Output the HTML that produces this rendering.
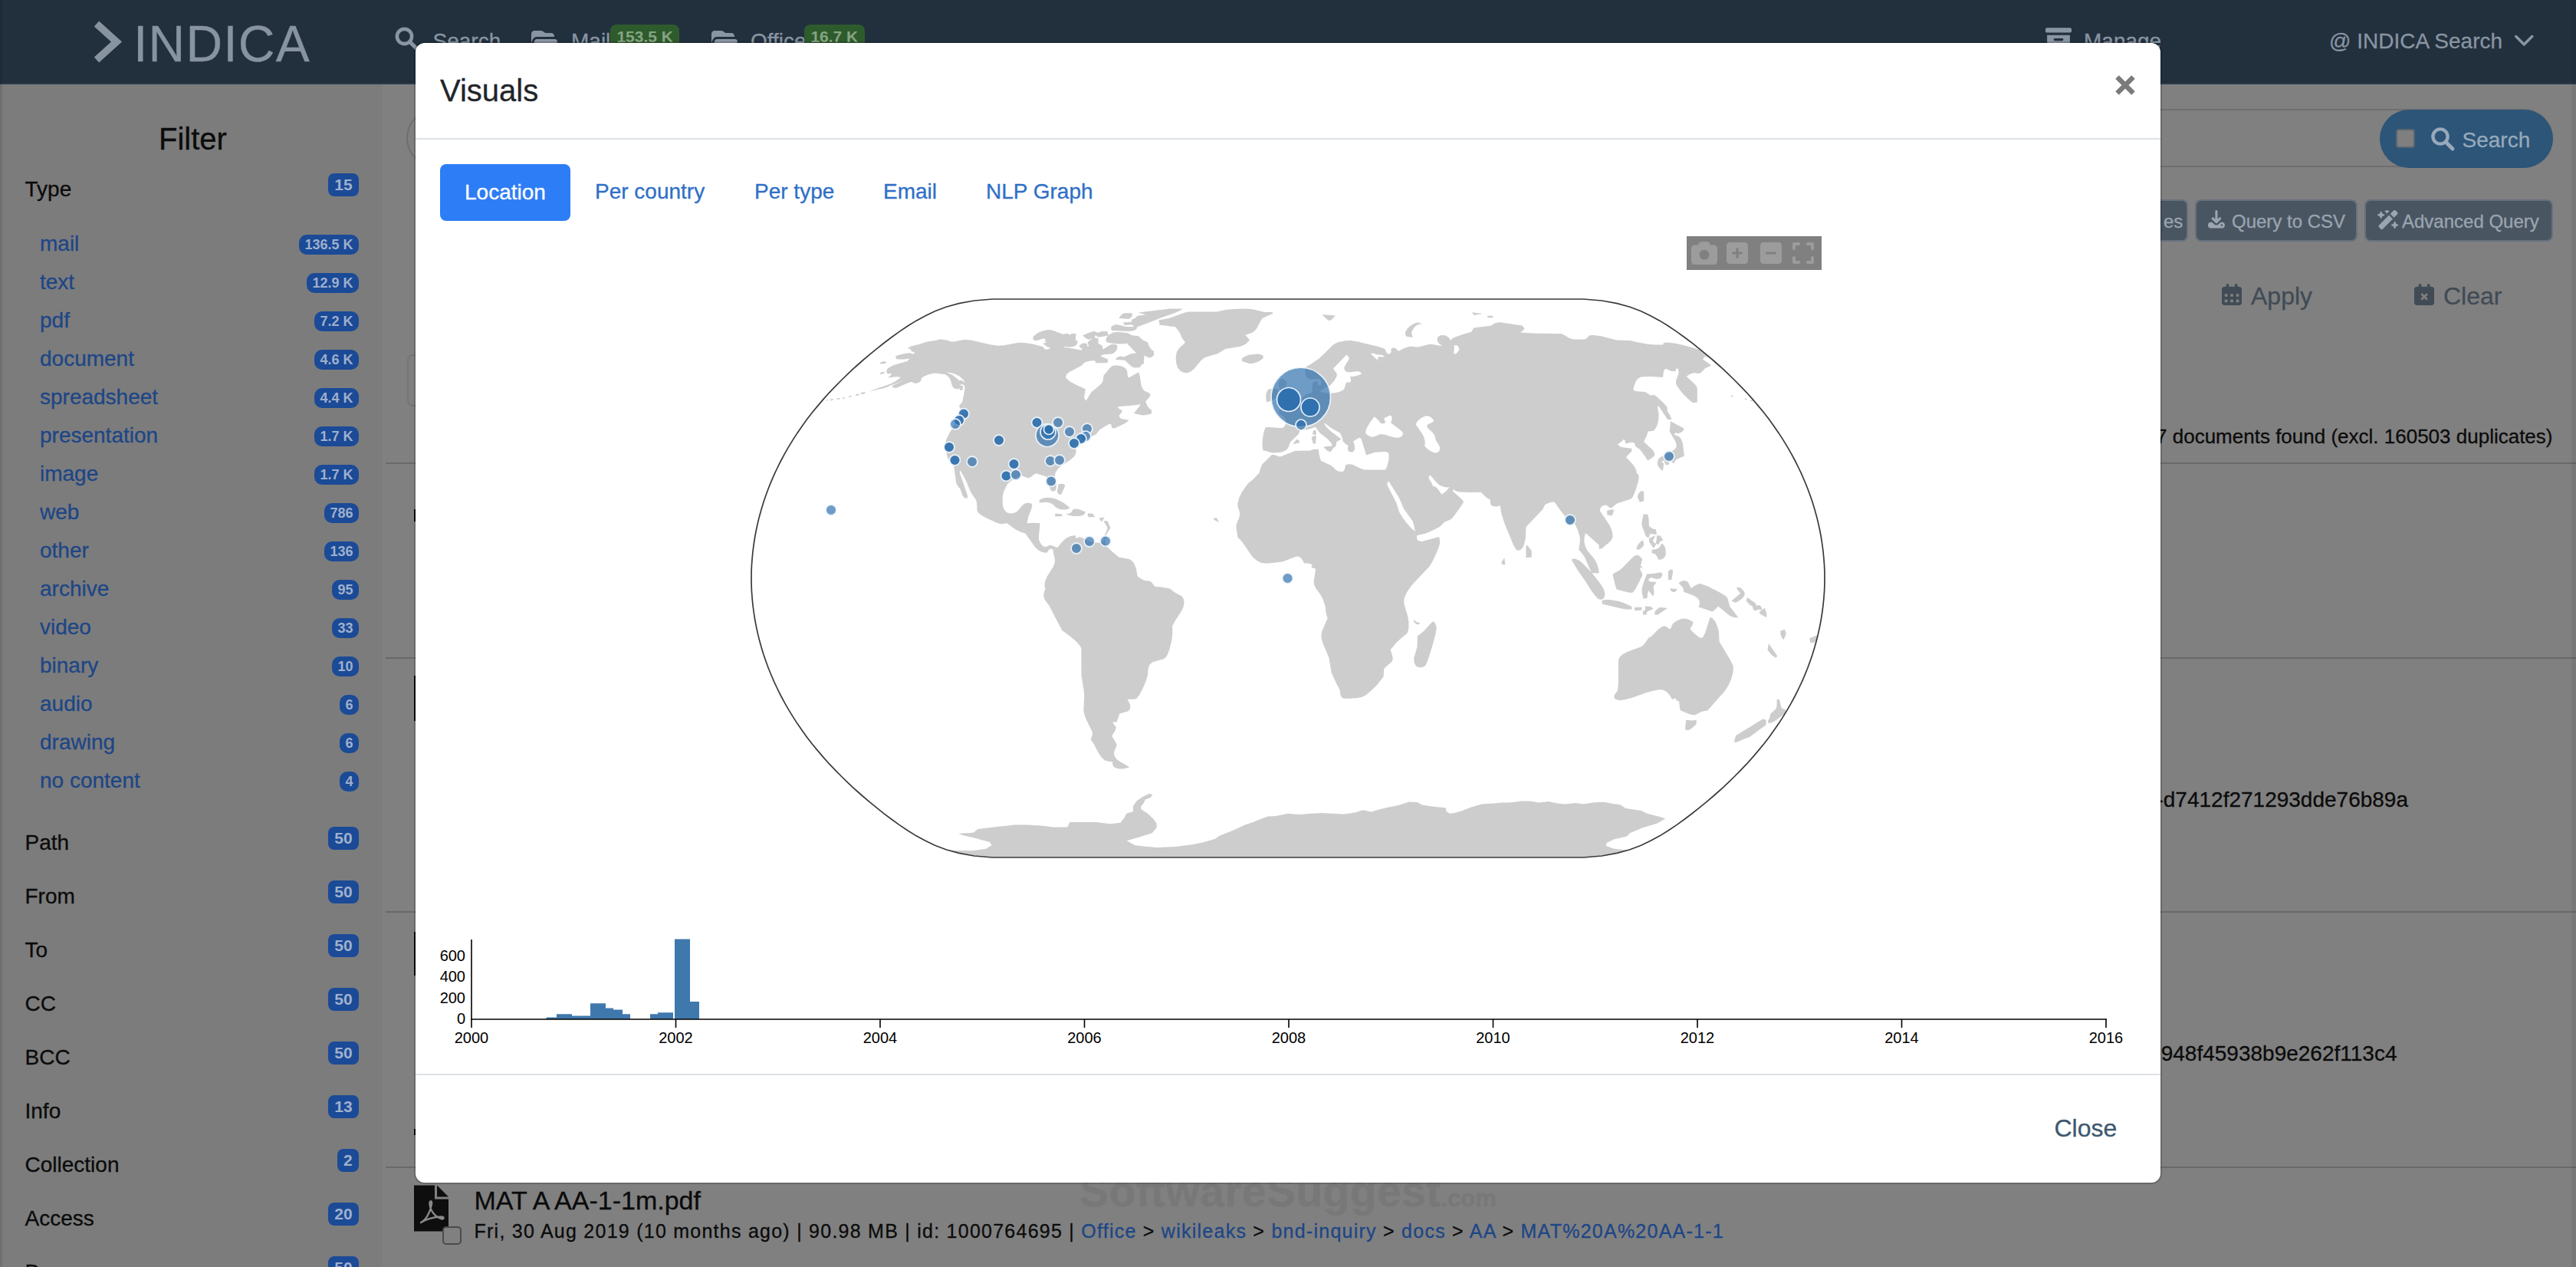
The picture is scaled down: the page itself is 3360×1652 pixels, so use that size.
<!DOCTYPE html><html><head><meta charset="utf-8"><title>INDICA</title><style>
*{box-sizing:border-box;margin:0;padding:0}
html,body{width:3360px;height:1652px;overflow:hidden;background:#808080}
body{font-family:"Liberation Sans",Arial,Helvetica,sans-serif;font-size:28px;color:#0b0b0b;position:relative}
.abs,.t,.ic,.b,.pb{position:absolute;white-space:nowrap}
.t{line-height:1;-webkit-text-stroke:0.3px currentColor}
.nav{left:0;top:0;width:3360px;height:110px;background:#222f3d;border-bottom:2px solid #2a3a4a}
.side{left:0;top:110px;width:499px;height:1542px;background:#7c7c7c}
.nt{color:#8995a2;font-size:28px}
.gb{background:#2e5b2c;color:#86a383;font-weight:700;font-size:21px;line-height:21px;padding:5px 8.4px 5.5px;border-radius:8px}
.h{font-size:28px;color:#0b0b0b;left:32.5px}
.l{font-size:28px;color:#1d4686;left:52px}
.b{right:2892px;background:#1b4a97;color:#9fb0cc;font-weight:700;font-size:21px;line-height:21px;padding:4.5px 8.4px 5px;border-radius:8px}
.pb{right:2892px;background:#1b4a97;color:#9fb0cc;font-weight:700;font-size:18px;line-height:18px;padding:4px 7.5px 4px;border-radius:10px}
.hl{left:503px;width:2857px;height:2px;background:#696969}
.modal{left:542px;top:56px;width:2276px;height:1486px;background:#fff;border-radius:12px;box-shadow:0 0 0 2px rgba(0,0,0,.18)}
.mline{left:542px;width:2276px;height:2px;background:#dee2e6}
.tab{font-size:28px;color:#2f6fc6}
.btn{background:#4a5562;border:2px solid #65717e;border-radius:8px;height:55px;top:260px;color:#9aa5b0;font-size:24px;line-height:51px}
</style></head><body>
<div class="abs nav"></div>
<svg class="ic" style="left:110px;top:20px;width:60px;height:70px" viewBox="110 20 60 70"><polyline points="126,31 152,54.5 126,78" fill="none" stroke="#8893a0" stroke-width="9.5" stroke-linejoin="miter"/></svg>
<div class="t " style="left:174px;top:24.3px;font-size:66px;color:#8893a0;letter-spacing:1.2px">INDICA</div>
<svg class="ic" style="left:510px;top:30px;width:40px;height:40px" viewBox="510 30 40 40"><circle cx="527.5" cy="47.5" r="9.6" fill="none" stroke="#8995a2" stroke-width="4.6"/><path d="M534.5,54.5L542.5,62.5" stroke="#8995a2" stroke-width="5.2" stroke-linecap="round"/></svg>
<div class="t nt" style="left:564.5px;top:39.5px;font-size:28px;">Search</div>
<svg class="ic" style="left:691px;top:38px;width:36.0px;height:32px;" viewBox="0 0 576 512"><path fill="#8995a2" d="m56 225.6-23.6 70.6V96c0-35.3 28.7-64 64-64h138.7c13.8 0 27.3 4.5 38.4 12.8l38.4 28.8c5.5 4.2 12.3 6.4 19.2 6.4h117.3c35.3 0 64 28.7 64 64v16H147c-41.3 0-78 26.4-91.1 65.6zM477.8 448H99c-32.8 0-55.9-32.1-45.5-63.2l48-144C108 221.2 126.4 208 147 208h378.8c32.8 0 55.9 32.1 45.5 63.2l-48 144c-6.5 19.6-24.9 32.8-45.5 32.8"/></svg>
<div class="t nt" style="left:745px;top:39.5px;font-size:28px;">Mail</div>
<div class="abs gb" style="left:796px;top:32px">153.5 K</div>
<svg class="ic" style="left:926px;top:38px;width:36.0px;height:32px;" viewBox="0 0 576 512"><path fill="#8995a2" d="m56 225.6-23.6 70.6V96c0-35.3 28.7-64 64-64h138.7c13.8 0 27.3 4.5 38.4 12.8l38.4 28.8c5.5 4.2 12.3 6.4 19.2 6.4h117.3c35.3 0 64 28.7 64 64v16H147c-41.3 0-78 26.4-91.1 65.6zM477.8 448H99c-32.8 0-55.9-32.1-45.5-63.2l48-144C108 221.2 126.4 208 147 208h378.8c32.8 0 55.9 32.1 45.5 63.2l-48 144c-6.5 19.6-24.9 32.8-45.5 32.8"/></svg>
<div class="t nt" style="left:979px;top:39.5px;font-size:28px;">Office</div>
<div class="abs gb" style="left:1049px;top:32px">16.7 K</div>
<svg class="ic" style="left:2668px;top:34px;width:34.0px;height:34px;" viewBox="0 0 512 512"><path fill="#8995a2" d="M0 64c0-17.7 14.3-32 32-32h448c17.7 0 32 14.3 32 32v32c0 17.7-14.3 32-32 32H32c-17.7 0-32-14.3-32-32zm32 112h448v240c0 35.3-28.7 64-64 64H96c-35.3 0-64-28.7-64-64zm152 64c-13.3 0-24 10.7-24 24s10.7 24 24 24h144c13.3 0 24-10.7 24-24s-10.7-24-24-24z"/></svg>
<div class="t nt" style="left:2718px;top:40.0px;font-size:28px;">Manage</div>
<div class="t nt" style="left:3038px;top:40.0px;font-size:28px;">@ INDICA Search</div>
<svg class="ic" style="left:3280px;top:37px;width:24.5px;height:28px;" viewBox="0 0 448 512"><path fill="#8995a2" d="M201.4 406.6c12.5 12.5 32.8 12.5 45.3 0l192-192c12.5-12.5 12.5-32.8 0-45.3s-32.8-12.5-45.3 0L224 338.7 54.6 169.4c-12.5-12.5-32.8-12.5-45.3 0s-12.5 32.8 0 45.3l192 192z"/></svg>
<div class="abs side"></div>
<div class="t " style="left:207px;top:161.3px;font-size:40px;">Filter</div>
<div class="t h" style="left:32.5px;top:232.5px;font-size:28px;">Type</div>
<div class="b" style="top:225.5px">15</div>
<div class="t l" style="left:52px;top:303.9px;font-size:28px;color:#1d4686">mail</div>
<div class="pb" style="top:305.9px">136.5 K</div>
<div class="t l" style="left:52px;top:353.9px;font-size:28px;color:#1d4686">text</div>
<div class="pb" style="top:355.9px">12.9 K</div>
<div class="t l" style="left:52px;top:403.9px;font-size:28px;color:#1d4686">pdf</div>
<div class="pb" style="top:405.9px">7.2 K</div>
<div class="t l" style="left:52px;top:453.9px;font-size:28px;color:#1d4686">document</div>
<div class="pb" style="top:455.9px">4.6 K</div>
<div class="t l" style="left:52px;top:503.9px;font-size:28px;color:#1d4686">spreadsheet</div>
<div class="pb" style="top:505.9px">4.4 K</div>
<div class="t l" style="left:52px;top:553.9px;font-size:28px;color:#1d4686">presentation</div>
<div class="pb" style="top:555.9px">1.7 K</div>
<div class="t l" style="left:52px;top:603.9px;font-size:28px;color:#1d4686">image</div>
<div class="pb" style="top:605.9px">1.7 K</div>
<div class="t l" style="left:52px;top:653.9px;font-size:28px;color:#1d4686">web</div>
<div class="pb" style="top:655.9px">786</div>
<div class="t l" style="left:52px;top:703.9px;font-size:28px;color:#1d4686">other</div>
<div class="pb" style="top:705.9px">136</div>
<div class="t l" style="left:52px;top:753.9px;font-size:28px;color:#1d4686">archive</div>
<div class="pb" style="top:755.9px">95</div>
<div class="t l" style="left:52px;top:803.9px;font-size:28px;color:#1d4686">video</div>
<div class="pb" style="top:805.9px">33</div>
<div class="t l" style="left:52px;top:853.9px;font-size:28px;color:#1d4686">binary</div>
<div class="pb" style="top:855.9px">10</div>
<div class="t l" style="left:52px;top:903.9px;font-size:28px;color:#1d4686">audio</div>
<div class="pb" style="top:905.9px">6</div>
<div class="t l" style="left:52px;top:953.9px;font-size:28px;color:#1d4686">drawing</div>
<div class="pb" style="top:955.9px">6</div>
<div class="t l" style="left:52px;top:1003.9px;font-size:28px;color:#1d4686">no content</div>
<div class="pb" style="top:1005.9000000000001px">4</div>
<div class="t h" style="left:32.5px;top:1084.5px;font-size:28px;">Path</div>
<div class="b" style="top:1077.5px">50</div>
<div class="t h" style="left:32.5px;top:1154.5px;font-size:28px;">From</div>
<div class="b" style="top:1147.5px">50</div>
<div class="t h" style="left:32.5px;top:1224.5px;font-size:28px;">To</div>
<div class="b" style="top:1217.5px">50</div>
<div class="t h" style="left:32.5px;top:1294.5px;font-size:28px;">CC</div>
<div class="b" style="top:1287.5px">50</div>
<div class="t h" style="left:32.5px;top:1364.5px;font-size:28px;">BCC</div>
<div class="b" style="top:1357.5px">50</div>
<div class="t h" style="left:32.5px;top:1434.5px;font-size:28px;">Info</div>
<div class="b" style="top:1427.5px">13</div>
<div class="t h" style="left:32.5px;top:1504.5px;font-size:28px;">Collection</div>
<div class="b" style="top:1497.5px">2</div>
<div class="t h" style="left:32.5px;top:1574.5px;font-size:28px;">Access</div>
<div class="b" style="top:1567.5px">20</div>
<div class="t h" style="left:32.5px;top:1644.5px;font-size:28px;">Dups</div>
<div class="b" style="top:1637.5px">50</div>
<div class="abs" style="left:530px;top:142px;width:2800px;height:76px;border:2px solid #6e6e6e;border-radius:38px"></div>
<div class="abs" style="left:3104px;top:143px;width:226px;height:76px;border-radius:38px;background:#2c5578"></div>
<div class="abs" style="left:3125px;top:168px;width:25px;height:25px;border-radius:4px;background:#7f7f7f;border:2px solid #5a6670"></div>
<svg class="ic" style="left:3166px;top:160px;width:44px;height:44px" viewBox="3166 160 44 44"><circle cx="3183" cy="178" r="9.6" fill="none" stroke="#97a9ba" stroke-width="4.4"/><path d="M3190,185L3199,194" stroke="#97a9ba" stroke-width="5" stroke-linecap="round"/></svg>
<div class="t " style="left:3211.5px;top:168.5px;font-size:28px;color:#97a9ba">Search</div>
<div class="abs btn" style="left:2600px;width:254px"></div>
<div class="t " style="left:2822px;top:277.4px;font-size:24px;color:#9aa5b0">es</div>
<div class="abs btn" style="left:2863px;width:212px"></div>
<svg class="ic" style="left:2880px;top:274px;width:21.9px;height:25px;" viewBox="0 0 448 512"><path fill="#9aa5b0" d="M256 32c0-17.7-14.3-32-32-32s-32 14.3-32 32v210.7l-41.4-41.4c-12.5-12.5-32.8-12.5-45.3 0s-12.5 32.8 0 45.3l96 96c12.5 12.5 32.8 12.5 45.3 0l96-96c12.5-12.5 12.5-32.8 0-45.3s-32.8-12.5-45.3 0L256 242.7zM64 320c-35.3 0-64 28.7-64 64v32c0 35.3 28.7 64 64 64h320c35.3 0 64-28.7 64-64v-32c0-35.3-28.7-64-64-64h-46.9l-56.6 56.6c-31.2 31.2-81.9 31.2-113.1 0L110.9 320zm304 56a24 24 0 1 1 0 48 24 24 0 1 1 0-48"/></svg>
<div class="t " style="left:2911px;top:277.4px;font-size:24px;color:#9aa5b0">Query to CSV</div>
<div class="abs btn" style="left:3084px;width:246px"></div>
<svg class="ic" style="left:3101px;top:274px;width:28.1px;height:25px;" viewBox="0 0 576 512"><path fill="#9aa5b0" d="m263.4-27 14.8 36.8L315 24.6c3 1.2 5 4.2 5 7.4s-2 6.2-5 7.4l-36.8 14.8L263.4 91c-1.2 3-4.2 5-7.4 5s-6.2-2-7.4-5l-14.8-36.8L197 39.4c-3-1.2-5-4.2-5-7.4s2-6.2 5-7.4l36.8-14.8L248.6-27c1.2-3 4.2-5 7.4-5s6.2 2 7.4 5M110.7 41.7l21.5 50.1 50.1 21.5c5.9 2.5 9.7 8.3 9.7 14.7s-3.8 12.2-9.7 14.7l-50.1 21.5-21.5 50.1c-2.5 5.9-8.3 9.7-14.7 9.7s-12.2-3.8-14.7-9.7l-21.5-50.1-50.1-21.5C3.8 140.2 0 134.4 0 128s3.8-12.2 9.7-14.7l50.1-21.5 21.5-50.1C83.8 35.8 89.6 32 96 32s12.2 3.8 14.7 9.7M464 304c6.4 0 12.2 3.8 14.7 9.7l21.5 50.1 50.1 21.5c5.9 2.5 9.7 8.3 9.7 14.7s-3.8 12.2-9.7 14.7l-50.1 21.5-21.5 50.1c-2.5 5.9-8.3 9.7-14.7 9.7s-12.2-3.8-14.7-9.7l-21.5-50.1-50.1-21.5c-5.9-2.5-9.7-8.3-9.7-14.7s3.8-12.2 9.7-14.7l50.1-21.5 21.5-50.1c2.5-5.9 8.3-9.7 14.7-9.7M460 0c11 0 21.6 4.4 29.5 12.2l42.3 42.3C539.6 62.4 544 73 544 84s-4.4 21.6-12.2 29.5l-88.2 88.2-101.3-101.3 88.2-88.2C438.4 4.4 449 0 460 0M44.2 398.5l264.2-264.2 101.3 101.3-264.2 264.2C137.6 507.6 127 512 116 512s-21.6-4.4-29.5-12.2l-42.3-42.3C36.4 449.6 32 439 32 428s4.4-21.6 12.2-29.5"/></svg>
<div class="t " style="left:3133px;top:277.4px;font-size:24px;color:#9aa5b0">Advanced Query</div>
<svg class="ic" style="left:2898px;top:370px;width:26.2px;height:30px;" viewBox="0 0 448 512"><path fill="#414b55" d="M128 0c17.7 0 32 14.3 32 32v32h128V32c0-17.7 14.3-32 32-32s32 14.3 32 32v32h32c35.3 0 64 28.7 64 64v288c0 35.3-28.7 64-64 64H64c-35.3 0-64-28.7-64-64V128c0-35.3 28.7-64 64-64h32V32c0-17.7 14.3-32 32-32M64 240v32c0 8.8 7.2 16 16 16h32c8.8 0 16-7.2 16-16v-32c0-8.8-7.2-16-16-16H80c-8.8 0-16 7.2-16 16m128 0v32c0 8.8 7.2 16 16 16h32c8.8 0 16-7.2 16-16v-32c0-8.8-7.2-16-16-16h-32c-8.8 0-16 7.2-16 16m144-16c-8.8 0-16 7.2-16 16v32c0 8.8 7.2 16 16 16h32c8.8 0 16-7.2 16-16v-32c0-8.8-7.2-16-16-16zM64 368v32c0 8.8 7.2 16 16 16h32c8.8 0 16-7.2 16-16v-32c0-8.8-7.2-16-16-16H80c-8.8 0-16 7.2-16 16m144-16c-8.8 0-16 7.2-16 16v32c0 8.8 7.2 16 16 16h32c8.8 0 16-7.2 16-16v-32c0-8.8-7.2-16-16-16zm112 16v32c0 8.8 7.2 16 16 16h32c8.8 0 16-7.2 16-16v-32c0-8.8-7.2-16-16-16h-32c-8.8 0-16 7.2-16 16"/></svg>
<div class="t " style="left:2936px;top:370.4px;font-size:32px;color:#414b55">Apply</div>
<svg class="ic" style="left:3149px;top:370px;width:26.2px;height:30px;" viewBox="0 0 448 512"><path fill="#414b55" d="M128 0c17.7 0 32 14.3 32 32v32h128V32c0-17.7 14.3-32 32-32s32 14.3 32 32v32h32c35.3 0 64 28.7 64 64v288c0 35.3-28.7 64-64 64H64c-35.3 0-64-28.7-64-64V128c0-35.3 28.7-64 64-64h32V32c0-17.7 14.3-32 32-32m163.9 220.1c-9.4-9.4-24.6-9.4-33.9 0L224.1 254l-33.9-33.9c-9.4-9.4-24.6-9.4-33.9 0s-9.4 24.6 0 33.9l33.9 33.9-33.9 33.9c-9.4 9.4-9.4 24.6 0 33.9s24.6 9.4 33.9 0l33.9-33.9 33.9 33.9c9.4 9.4 24.6 9.4 33.9 0s9.4-24.6 0-33.9L258 287.9l33.9-33.9c9.4-9.4 9.4-24.6 0-33.9"/></svg>
<div class="t " style="left:3187px;top:370.4px;font-size:32px;color:#414b55">Clear</div>
<div class="t " style="left:0px;top:555.7px;font-size:26px;left:auto;right:30.5px">153567 documents found (excl. 160503 duplicates)</div>
<div class="abs hl" style="top:603px"></div>
<div class="abs hl" style="top:856.5px"></div>
<div class="abs hl" style="top:1187.5px"></div>
<div class="abs hl" style="top:1520.5px"></div>
<div class="t " style="left:0px;top:1028.5px;font-size:28px;left:auto;right:219px">md5: 8c1f0a3b7e9d4c2a5b6f-d7412f271293dde76b89a</div>
<div class="t " style="left:0px;top:1360.0px;font-size:28px;left:auto;right:233.5px">md5: 41d8cd98f00b204e9800998e948f45938b9e262f113c4</div>
<div class="abs" style="left:531px;top:462px;width:60px;height:68px;border:2px solid #757575;border-radius:8px"></div>
<div class="abs" style="left:540px;top:664px;width:6px;height:16px;background:#0c0c0c"></div>
<div class="abs" style="left:540px;top:881px;width:6px;height:59px;background:#0c0c0c"></div>
<div class="abs" style="left:540px;top:1215px;width:6px;height:57px;background:#0c0c0c"></div>
<div class="abs" style="left:540px;top:1472px;width:6px;height:8px;background:#0c0c0c"></div>
<svg class="ic" style="left:538px;top:1543px;width:52px;height:66px" viewBox="538 1543 52 66"><path d="M540,1545.5h27v18h18v42h-45z" fill="#0e0e0e"/><path d="M570,1545.5l15,15h-15z" fill="#0e0e0e"/><path d="M549,1594c6-3 12-12 14-24c1-5-3-5-2.5 0c1,10 8,17 15,19c4,1 4,-2.5 0,-2.5c-9,0 -20,3 -26.500,7.5z" fill="none" stroke="#8a8a8a" stroke-width="2.4" stroke-linejoin="round"/></svg>
<div class="abs" style="left:577px;top:1599px;width:25px;height:24px;border:2px solid #4a4a4a;border-radius:5px;background:#808080"></div>
<div class="t " style="left:618.5px;top:1547.5px;font-size:34px;">MAT A AA-1-1m.pdf</div>
<div class="t " style="left:618.5px;top:1592.6px;font-size:25px;letter-spacing:1.25px">Fri, 30 Aug 2019 (10 months ago) | 90.98 MB | id: 1000764695 | <span style="color:#1d4686">Office</span> &gt; <span style="color:#1d4686">wikileaks</span> &gt; <span style="color:#1d4686">bnd-inquiry</span> &gt; <span style="color:#1d4686">docs</span> &gt; <span style="color:#1d4686">AA</span> &gt; <span style="color:#1d4686">MAT%20A%20AA-1-1</span></div>
<div class="t " style="left:1408px;top:1524.9px;font-size:57px;font-weight:700;color:#787878;letter-spacing:0.4px">SoftwareSuggest<span style="font-size:31px;letter-spacing:0">.com</span></div>
<div class="abs" style="left:0;top:0;width:3px;height:1652px;background:rgba(0,0,0,.09)"></div>
<div class="abs" style="left:3354px;top:0;width:6px;height:1652px;background:rgba(0,0,0,.06)"></div>
<div class="abs modal"></div>
<div class="t " style="left:574px;top:98.3px;font-size:40px;color:#212529">Visuals</div>
<svg class="ic" style="left:2755px;top:94px;width:34px;height:34px" viewBox="2755 94 34 34"><path d="M2761.5,100.5L2782.5,121.5M2782.5,100.5L2761.5,121.5" stroke="#7b7b7b" stroke-width="6.5" fill="none"/></svg>
<div class="abs mline" style="top:180px"></div>
<div class="abs" style="left:574px;top:214px;width:170px;height:74px;border-radius:8px;background:#2d7df6"></div>
<div class="t " style="left:606px;top:236.7px;font-size:28px;color:#fff">Location</div>
<div class="t tab" style="left:776px;top:236.1px;font-size:28px;">Per country</div>
<div class="t tab" style="left:984px;top:236.1px;font-size:28px;">Per type</div>
<div class="t tab" style="left:1152px;top:236.1px;font-size:28px;">Email</div>
<div class="t tab" style="left:1286px;top:236.1px;font-size:28px;">NLP Graph</div>
<div class="abs mline" style="top:1400px"></div>
<div class="t " style="left:2679.5px;top:1455.1px;font-size:32px;color:#3e586e">Close</div>
<svg class="ic" style="left:0;top:0;width:3360px;height:1652px" viewBox="0 0 3360 1652"><defs><clipPath id="fr"><path d="M2065.3,1118.0L2089.4,1116.0L2109.2,1112.4L2126.0,1107.7L2140.5,1102.2L2153.4,1096.1L2165.3,1089.6L2176.3,1082.7L2186.9,1075.6L2197.1,1068.3L2207.0,1060.8L2216.6,1053.2L2226.1,1045.4L2235.4,1037.5L2244.4,1029.5L2253.2,1021.3L2261.8,1013.0L2270.1,1004.7L2278.2,996.2L2285.9,987.6L2293.3,978.9L2300.5,970.2L2307.3,961.4L2313.7,952.5L2319.9,943.6L2325.7,934.6L2331.2,925.6L2336.4,916.6L2341.3,907.5L2345.8,898.5L2350.1,889.4L2354.0,880.3L2357.7,871.3L2361.0,862.2L2364.1,853.2L2366.9,844.1L2369.4,835.1L2371.6,826.1L2373.6,817.0L2375.3,808.0L2376.7,799.0L2377.9,790.0L2378.8,781.0L2379.5,772.0L2379.9,763.0L2380.0,754.0L2379.9,745.0L2379.5,736.0L2378.8,727.0L2377.9,718.0L2376.7,709.0L2375.3,700.0L2373.6,691.0L2371.6,681.9L2369.4,672.9L2366.9,663.9L2364.1,654.8L2361.0,645.8L2357.7,636.7L2354.0,627.7L2350.1,618.6L2345.8,609.5L2341.3,600.5L2336.4,591.4L2331.2,582.4L2325.7,573.4L2319.9,564.4L2313.7,555.5L2307.3,546.6L2300.5,537.8L2293.3,529.1L2285.9,520.4L2278.2,511.8L2270.1,503.3L2261.8,495.0L2253.2,486.7L2244.4,478.5L2235.4,470.5L2226.1,462.6L2216.6,454.8L2207.0,447.2L2197.1,439.7L2186.9,432.4L2176.3,425.3L2165.3,418.4L2153.4,411.9L2140.5,405.8L2126.0,400.3L2109.2,395.6L2089.4,392.0L2065.3,390.0L1294.7,390.0L1270.6,392.0L1250.8,395.6L1234.0,400.3L1219.5,405.8L1206.6,411.9L1194.7,418.4L1183.7,425.3L1173.1,432.4L1162.9,439.7L1153.0,447.2L1143.4,454.8L1133.9,462.6L1124.6,470.5L1115.6,478.5L1106.8,486.7L1098.2,495.0L1089.9,503.3L1081.8,511.8L1074.1,520.4L1066.7,529.1L1059.5,537.8L1052.7,546.6L1046.3,555.5L1040.1,564.4L1034.3,573.4L1028.8,582.4L1023.6,591.4L1018.7,600.5L1014.2,609.5L1009.9,618.6L1006.0,627.7L1002.3,636.7L999.0,645.8L995.9,654.8L993.1,663.9L990.6,672.9L988.4,681.9L986.4,691.0L984.7,700.0L983.3,709.0L982.1,718.0L981.2,727.0L980.5,736.0L980.1,745.0L980.0,754.0L980.1,763.0L980.5,772.0L981.2,781.0L982.1,790.0L983.3,799.0L984.7,808.0L986.4,817.0L988.4,826.1L990.6,835.1L993.1,844.1L995.9,853.2L999.0,862.2L1002.3,871.3L1006.0,880.3L1009.9,889.4L1014.2,898.5L1018.7,907.5L1023.6,916.6L1028.8,925.6L1034.3,934.6L1040.1,943.6L1046.3,952.5L1052.7,961.4L1059.5,970.2L1066.7,978.9L1074.1,987.6L1081.8,996.2L1089.9,1004.7L1098.2,1013.0L1106.8,1021.3L1115.6,1029.5L1124.6,1037.5L1133.9,1045.4L1143.4,1053.2L1153.0,1060.8L1162.9,1068.3L1173.1,1075.6L1183.7,1082.7L1194.7,1089.6L1206.6,1096.1L1219.5,1102.2L1234.0,1107.7L1250.8,1112.4L1270.6,1116.0L1294.7,1118.0Z"/></clipPath></defs><g clip-path="url(#fr)"><path d="M2408.4,815.5L2407.3,819.1L2402.8,819.1L2403.9,814.3ZM2196.9,594.4L2186.8,598.9L2182.8,604.3L2181.6,603.6L2178.8,600.4L2177.2,599.8L2175.8,600.1L2176.8,601.3L2177.4,602.8L2176.6,606.1L2172.4,606.1L2170.4,600.4L2168,601.3L2167.3,601.9L2170.1,604.6L2169,614.2L2164.7,610.5L2162.4,607.1L2161.9,604.9L2162.2,601.7L2163.1,599L2164.5,597L2167.6,595.1L2176,591.4L2180.7,588.6L2184.1,586.1L2186.6,583L2186.5,579.3L2185.3,575.3L2177.7,562.7L2178.9,549.2L2196.1,558.2L2196.1,560.9L2193.2,563.4L2190.5,564.8L2188.7,565.1L2186.8,564.8L2185.6,563.9L2184.4,565.6L2183.9,567.1L2186,567.4L2189.4,568.9L2190.8,570L2193.1,573.1L2194.7,577.3ZM2373.2,829.3L2366.4,838L2361.3,838L2360.2,832.3L2370.9,828.1L2372,829ZM1947.3,414.2L1940.3,414.2L1940.3,411.8L1947.3,411.8ZM2304.3,805.3L2295.3,800.2L2295.3,796.6L2296.7,796.9L2297.4,795.8L2301.5,792.7L2304.3,799.3ZM2329.7,826.6L2326.6,834.1L2324.9,832.6L2323.5,830.1L2322.6,826.7L2322.1,822.4L2325.1,821.9L2327.5,820.3L2329.2,824.3ZM2297.9,795.4L2293.1,794.5L2289.6,796.5L2288,795.7L2286.6,793.6L2285.7,790.3L2283.9,789.6L2281.9,788.3L2277.6,783.4L2279,778.9L2288.8,785.8L2290.8,788.3L2291.4,790.6L2293.6,788.8L2295.5,789.6L2297.9,792.1ZM1933.8,409.1L1922.8,410.9L1919.7,407.3ZM2275.9,773.8L2275.1,777L2272.8,780.1L2266.6,784.4L2263.4,785.8L2258.4,783.4L2270.2,773.5L2266.8,769.7L2264.9,766L2269.3,766L2270.7,766.7L2274.8,771.1ZM2144.2,653.2L2138.8,654.7L2136,648.4L2136.3,645.8L2137.2,643.7L2138.7,641.8L2140.8,640L2144.2,640.9ZM2318.4,855.4L2316.2,857.8L2314.9,857L2310.8,853.9L2305.5,847.6L2306.9,838.9ZM2160.8,697L2152.8,695.9L2151.9,697.1L2150.7,700.9L2148.2,700.4L2146.4,698.8L2145.6,695.7L2142.2,687.3L2141.4,683.2L2141.7,679.7L2143.6,670.6L2148.7,670.6L2149.2,671.4L2150.1,673.9L2150.6,677.6L2150.9,685.6L2152.9,687.7L2155,689.1L2157.4,689.9L2160,690.1ZM2169.3,704.5L2165.3,706L2162.8,710.8L2160.5,708.7L2158.7,712.2L2156.6,714.7L2154.5,711.2L2150.9,706.6L2150.9,702.1L2158.8,698.2L2158.2,700.9L2156.3,703.6L2156.3,706.3L2159.4,709L2160.7,703.6L2161.1,698.2L2164.2,698.2L2165.4,698.6L2167.2,700.7ZM2267.4,805.3L2262.2,805.2L2258,803.8L2255.1,801.9L2241.2,790.6L2236,795.8L2233.6,797.5L2215.5,791.5L2216.6,788.5L2216.9,786.1L2216.4,783.2L2214.9,780.7L2212.3,778.4L2208.8,776.5L2196.1,771.7L2196.2,769.4L2195.4,767L2193.7,764.5L2189.6,760.6L2192.1,758.4L2194.5,757.2L2197.2,757L2199.2,757.4L2200.7,758.2L2201.9,759.3L2205.9,766.9L2209.4,764.4L2213.9,762L2216.4,761.3L2218.8,761.3L2227.1,764.2L2243.3,772.5L2250.2,776.8L2252.7,779.1L2253.3,780.1L2256.4,790.9ZM2172.9,722.5L2172.1,725.3L2169.6,727.9L2167,729.4L2163.1,729.4L2161.3,725.4L2159.3,722.8L2157,721.5L2154.6,721.6L2154.6,716.8L2159.5,716.2L2163.1,714.7L2165.6,712.3L2166.7,709L2168.2,709.3L2169.4,710L2171.4,712.5L2172.5,716.7ZM2182.2,744.7L2180.3,756.1L2175.8,756.1L2175.8,745.6L2178.9,742.3L2181.4,742.9L2182,743.7ZM2105.3,664.6L2104.6,667.5L2102.4,672.4L2096.2,671.2L2096.2,665.8L2101.1,664.4ZM2144.2,710.5L2142.4,713.2L2139.2,716L2138.2,716.5L2134.3,716.5L2135.1,713L2136.8,709.8L2139.4,706.7L2143,703.9ZM2187.9,768.1L2185.8,771L2184.4,771.8L2182.8,772L2181.3,771.7L2180,770.8L2177.7,767.2ZM2329.4,924.7L2328.3,930.4L2318.8,937.6L2313.7,940.9L2307.7,943.2L2305.5,940.9L2308.3,935.4L2309.4,930.4L2314.7,926L2317,923.2L2317.5,919.8L2317.6,912.1L2321,912.1L2323,921.1L2324.4,923.7L2327,924.8ZM1855.1,422.3L1850.1,423L1848,424L1844.5,427L1841.9,431.5L1841,434.3L1842.7,440L1834.3,438.8L1832.8,435.2L1833.2,432.7L1835.3,428.9L1839,425.3L1843.5,422.4L1847.6,420.8L1850,420.5ZM2168.4,748.6L2168.2,750.1L2167.1,752.6L2166.2,753.6L2163.9,754.8L2160.2,755.1L2154,753.1L2152.1,753.8L2149.8,755.8L2151,757.6L2152.8,758.6L2156,758.8L2159.4,758.7L2160.5,758.6L2160.6,758.6L2159.3,761.1L2156.6,764.8L2157.4,771.8L2157.1,776.8L2155.8,776.7L2154.7,775.8L2150.4,769.9L2149,774L2148.7,779.8L2143.6,780.7L2141.7,772.2L2141.5,767.7L2144,758.9L2148.1,748.6L2155.7,747.9L2166.2,746.2ZM2142.5,739.9L2140,740.1L2139.2,740.7L2139.1,741.4L2139.6,743.4L2142,747.5L2142.2,748.9L2141.9,751L2133.5,767.5L2131.5,770.5L2129.8,772.3L2128.4,772.9L2124.1,772.4L2109.2,768.7L2108,766.7L2106.7,762.6L2104.4,752.9L2103.6,748.6L2103.8,748.3L2112.2,743.8L2116.6,739.9L2128.8,727.5L2131.7,725.1L2134,723.9L2135.8,723.8L2137.6,724.4L2139.3,725.7L2141.9,728.8L2142.1,729.5L2142.2,729.7L2142.2,729.9L2142.2,730.3L2142.1,729.4L2139.9,737.8L2141.3,738.5ZM2174.9,793L2162.5,801.4L2158.3,801.4L2158.3,798.1L2158.7,797L2160.9,794.8L2165,791.8ZM2156.3,794.2L2149.1,797.1L2147.9,798.8L2147.8,801.4L2143.3,801.4L2142.5,796.6L2145.3,796.6L2145.9,794.2L2146.1,790.6L2152.8,790.8L2155,792.3ZM2141.4,795.4L2132.3,796.3L2132,793.3L2132.6,791.8L2141.4,791.8ZM2303.5,945.3L2282.1,960.9L2274.1,963.7L2265.4,967.8L2262,967.8L2262.6,964.2L2264.3,959.1L2299.3,937.6L2303.5,938.5ZM2128.4,794.5L2121.1,794.4L2115,793.5L2089.7,787.6L2089.7,783.1L2093.9,782L2099.7,782L2107.8,783.2L2111.9,784.1L2120.1,787L2128.4,790.9ZM2260.9,870.1L2260.2,878L2258,885.9L2254.4,893.7L2249.4,901.6L2227.1,926.5L2223,927L2218.9,928.3L2210.4,932.5L2207.3,932.1L2203.1,930.9L2191.8,926.2L2190.8,921.1L2190.1,914.5L2188.8,913.8L2186.5,913.6L2185.3,910L2182.8,911.8L2180.8,911.5L2177.6,906.1L2174.1,902.2L2170.3,899.9L2168.2,899.4L2163.8,899.3L2155,900.9L2147.7,903L2127.5,910.3L2117.9,912.5L2112.9,913L2109.5,912.6L2107.2,911.7L2106.3,911L2105.4,909.1L2105.5,906.7L2109.5,901L2110.3,898L2110.9,889.6L2110.9,862.3L2111.6,858.7L2113.8,855.4L2117.4,852.5L2122.5,850L2141,843L2143.4,841L2146,837.9L2150.4,831.4L2151.9,831L2154,829.7L2162.9,820.8L2167.2,817.5L2169.6,816.5L2172.3,816.6L2174.8,817.9L2177.4,820.3L2178.4,820.1L2179.5,819L2181.2,814.6L2182.9,812.3L2187,809.5L2192.2,807.2L2195.6,806.6L2199.1,806.7L2203.1,808.1L2208.2,810.7L2208.2,814L2204.5,819.7L2204.8,820.3L2207.5,823.5L2212.4,828.1L2216.9,831.3L2218.9,832L2220.6,831.2L2221.5,830.3L2224.1,825.2L2230.7,804.4L2234.1,806.4L2237.1,810.2L2238.5,812.9L2240.9,819.5L2242,823.6L2242.6,836.5L2257.4,861.4L2260.4,867.7ZM1741.8,411.5L1737.3,416.4L1734.7,418.1L1732.8,417.6L1730.4,416.1L1724.3,410.3L1730.8,410.4ZM1997.8,726.4L1990.5,727.3L1990.5,713.1L1991,710.8L1992.1,711.3L1993.7,712.8L1997.4,717.8L1997.8,719.2ZM2212.7,944.1L2207.4,949.1L2203.2,951.7L2200.7,952.2L2198,951L2199.2,938.8L2207.1,939.5L2212.7,938.8ZM2246.3,467.9L2243.7,469.2L2240.3,469.3L2232.5,467.5L2223.7,464.6L2222.4,466.2L2221.2,468.8L2225.9,471.8L2232.2,476.6L2223.7,480.5L2221.3,483.4L2217.5,486.8L2215,487.1L2210.7,486.2L2207.9,486.5L2203.9,487.9L2199.7,490.7L2210.5,500.8L2212.3,503L2213.5,505.2L2213.8,507.2L2213.8,524.6L2210.1,525.1L2209.5,525.2L2209.2,525.3L2209.2,525.4L2210.2,525.5L2209.1,525.3L2207.9,524.8L2204.8,522.7L2196.1,514.4L2191.6,509.1L2187.3,503L2186.1,500.2L2186,497.7L2186.9,494.3L2189.1,488.2L2189.6,485.3L2189.2,482.8L2188.2,480.2L2186.9,480.5L2186,481.3L2185.7,482.5L2185.9,484.1L2179.7,484L2174.1,481.2L2172.8,481.1L2171.5,481.6L2170.6,482.6L2170,484.1L2169,491.9L2154.2,491.1L2141.6,491.2L2139.1,492.1L2136.9,493.4L2135,495.3L2133.4,497.8L2131.1,504.3L2130.4,508.4L2132.2,509.4L2135,510.2L2145.3,510.9L2147.3,511.7L2152.7,515.4L2154.2,515.5L2157.1,514.7L2160.2,516.4L2169.1,524.7L2173.8,529.7L2174.6,531.8L2174.9,536.6L2178.4,541.6L2180.3,547.1L2175.2,547.1L2162.8,528.5L2162.2,531.9L2163.6,539.9L2163.5,544.3L2162.7,550.6L2161,555.8L2159.8,558.1L2156.9,561.8L2149.5,562.4L2148,568.2L2144.2,575.5L2146.8,578.6L2156,587.1L2157.4,589.4L2158.2,591.7L2158.1,593.7L2157,595.3L2154.7,597.1L2149.2,600.4L2144.9,593.9L2138.8,585.7L2133.5,582.4L2132.2,578.4L2131.2,577.3L2128.3,576.8L2120.2,578.5L2119.5,574.3L2118.8,573.2L2117.9,572.8L2116.4,574.5L2110.1,579.4L2111.8,581.2L2114.9,582.9L2128.4,584.8L2128.4,588.4L2125.1,591.4L2121,595.9L2131.2,607.3L2134.3,613.2L2135.1,617.5L2136.7,618.6L2137.5,620.4L2137.6,623.3L2136.8,628.3L2133.1,640.1L2129.7,648L2127.3,650.5L2108.6,656.8L2103.1,661.5L2101.1,662.5L2099.3,662.1L2096.2,659.2L2094.8,658.6L2091.4,659.1L2090,659.7L2088,661.6L2087,664.4L2087.1,666.4L2098.8,683.7L2101.4,688.9L2103,693.9L2103.6,698.5L2103.2,701L2102.2,703.5L2099.2,707L2092.1,712.8L2089.5,715.6L2086.4,715.6L2085.8,715.4L2085.5,714.6L2085.8,711.7L2085.5,710.5L2068,694.9L2066.4,702.3L2066.5,707L2066.9,709.5L2068.6,714.4L2071.4,719.1L2079.4,728.4L2082.5,733.9L2083.7,736.9L2085.3,743.5L2085.8,747.1L2082.8,747.4L2076.5,747.1L2088.2,762.1L2091.7,767.9L2093.3,772.9L2093.3,776.2L2092.5,779L2091,780.8L2088.7,781.8L2085.9,781.5L2084.2,780.4L2080,775.9L2074.6,768.4L2068,757.9L2058.9,745.1L2049.7,730L2051.2,728.7L2053.9,728.6L2056.8,729.4L2059.8,730.8L2064.4,734.5L2074.5,744.7L2075.6,744.7L2073,740.7L2066.7,726.1L2062.6,720.4L2059.3,717.1L2061,704.7L2060.5,699.5L2057.8,690.8L2052.8,680.2L2050.5,682.6L2048.3,683.9L2047.6,684.1L2046.9,684.1L2043.5,683.2L2042.8,678.9L2041.2,673L2035.3,665.6L2027.7,654.7L2025.7,654.4L2021.2,655.2L2015.3,658L2012.2,664.3L1990.5,687.1L1989.9,700.5L1989.1,705.8L1987.9,710.1L1986.4,713.4L1984.6,715.8L1982.3,717.2L1979.8,717.7L1979,717.5L1977.2,716.1L1974.3,711.3L1962.8,683.2L1958.5,670.5L1956.4,658.6L1954.9,659.7L1951.9,660.4L1948.9,660.3L1945.7,659.3L1944,657.3L1943.8,654.2L1944.2,652.3L1938.5,648.5L1931.5,641.8L1915.8,642.1L1904.6,641.5L1899.5,640.4L1896.3,638.7L1895.4,637.6L1894.9,639.4L1895.9,641.2L1907.2,651.6L1909,654.1L1908.5,655.5L1906.1,659.5L1895.9,673.5L1892.9,676.9L1884.5,680.5L1878,686.8L1870.1,691.1L1859,695.7L1848.4,697.9L1848,698.4L1847.9,701.4L1848.7,703.7L1850.4,705.2L1851.6,705.6L1854.6,706L1877.1,700L1878.2,705.9L1878.2,708.1L1876.8,713.1L1873.9,720.5L1868.9,731.3L1865.7,736.8L1863.9,739.3L1844.1,760L1841.1,763.6L1836.2,770.4L1834.4,773.4L1832,778.9L1831.4,781.4L1831.3,785.8L1832.9,792.5L1836.3,804.1L1837.4,810.2L1837.5,818.1L1836.9,821.6L1836.1,824.4L1834.8,826.3L1825.8,833.8L1821.3,838.1L1813.7,847.3L1816.6,856.9L1816.5,860.2L1815.6,862.3L1814.1,864.1L1807.5,869.4L1805.2,872.2L1804.6,882.1L1803.9,883.2L1795.3,894.1L1789.6,899.6L1782.6,905.5L1779,907.8L1776.1,909L1769.5,910.3L1759.6,910.8L1753.1,910.7L1750.4,909.6L1748.8,907.6L1747.4,898.9L1742.5,889.9L1736.7,877L1733.3,857.2L1725.6,839L1724,833.5L1723.5,830.2L1723.5,827.3L1724.5,822.5L1730.8,808.1L1731.6,806.1L1731.8,805.4L1731.9,805L1731.8,805.7L1731.7,805.9L1731.5,805.7L1730.9,804L1729.3,798.1L1728.8,791.2L1725.4,781.2L1723.1,776.5L1716.4,767.2L1714.1,762.5L1713.6,758.6L1716.1,742L1714.1,740.7L1710.7,740.2L1710.8,738.3L1711.6,736.9L1709.8,735.3L1705.6,734.4L1700.9,734.2L1699.2,730.4L1697.1,727.7L1694.6,726.1L1693.1,725.6L1691.6,725.5L1689.7,725.9L1676.1,731.3L1672.1,732.4L1654.6,734.4L1649.8,734.5L1644.5,733.7L1639.4,731.1L1634.6,726.9L1632.3,724.2L1620.9,707.4L1617.3,703.3L1614.6,700.9L1612.9,691.2L1612.3,685.6L1613.2,682.3L1616.1,675.4L1617.1,671.2L1616.8,667.6L1614.8,661.7L1614.3,658.6L1614.5,655.5L1616.3,648.9L1619.8,641.7L1625.1,634.1L1628.4,630.1L1634.8,624.7L1642.8,616.3L1643.8,611.8L1646.2,605.5L1659,592.9L1661.9,592.9L1668,595.3L1669.8,595.6L1689,588.1L1694.6,587.7L1709,587.5L1710.9,586.4L1712.5,586L1719.8,585.7L1720.5,592.2L1722.9,600.7L1736.5,607L1742.6,612.8L1745.5,614.4L1750.5,615.1L1752.2,614.6L1754,611.7L1755,606.4L1756.7,605.7L1759.8,605.3L1762.5,605.5L1764.8,606.1L1775.1,611L1779.8,612.4L1807.2,612.4L1809.2,608L1811.1,600.9L1811.7,593.2L1811.5,591.9L1810.4,590.3L1808.3,589.3L1805.4,589L1793.3,589.8L1782.1,593.5L1775.6,572.5L1774.5,571.2L1773.1,570.7L1770.4,571.9L1765.2,575.5L1767,581.5L1767.1,584.8L1766.5,587.2L1764.8,589.3L1762.9,589.6L1760.7,589.3L1759.1,588.3L1758.1,586.6L1757.8,583.9L1758.7,581.2L1755.6,579.2L1751.6,575.5L1750.9,571.3L1748.2,564.8L1737.5,558.8L1728.2,551.9L1727.1,551.9L1729.4,556L1731.9,558.8L1737,563.3L1749.4,572.5L1743.2,576.4L1742.6,581.5L1739.2,584.2L1735.3,589.6L1731,587.4L1726.2,583L1730.5,582.1L1736.7,581.8L1737.5,580.9L1736.6,578.1L1731.8,572.6L1721.5,564.4L1718.8,561.1L1716.7,557.9L1715.5,556.1L1716.1,556.3L1715.7,556.6L1714.8,557L1713.5,557.5L1706.5,559.7L1695.5,561.5L1693.8,566L1682.8,576.7L1680.6,583.3L1678,586.5L1676.1,587.7L1671.4,589.5L1668.4,590.1L1661.4,590.5L1658.4,590.2L1651.3,588.1L1647.6,587.5L1646.5,581L1646.7,573.3L1648,565.5L1650.4,557.3L1655.9,557L1668.2,558.1L1672,558L1674.5,556.9L1676.2,554.6L1676.8,553.1L1677.2,549.2L1676.6,546.6L1673.7,542.8L1668.2,539L1668.2,534.5L1672.8,534L1680,531.4L1684.9,528.5L1704.3,514.1L1711.3,512L1712,501.1L1712.7,499.1L1714.1,497.7L1716.2,497.1L1718.9,497L1718.7,499.4L1719.8,502.1L1722,502.1L1723.1,500.9L1723.4,499.4L1723.1,497L1721.3,494.7L1718.1,494L1712.5,494.8L1709.4,494.7L1705.9,493.2L1704.6,491.9L1702.9,488.3L1702.4,485.9L1702.3,482.4L1703.4,478.4L1710.9,474.1L1720.9,467.3L1738.4,449.9L1742.8,447.3L1745.4,446.2L1754.7,444.3L1762.1,443.9L1772.4,445.8L1796.3,451.6L1804.9,454.3L1806.6,455.6L1809.4,461.2L1810.3,461.6L1811.5,461.5L1813.4,460.7L1814.4,459L1814.5,455L1815.7,454.1L1817.3,453.6L1819,453.5L1820.2,454.1L1824.1,457.7L1831.8,454L1838,452.1L1841.6,451.7L1846.7,452.5L1850.2,452.5L1864.5,448.7L1868.7,449L1876.8,450.6L1881.1,451.1L1877.1,447.9L1875.5,445.8L1874.7,443.7L1874.7,441.3L1875.1,440.2L1875.8,439.2L1877.9,437.8L1881.1,437.1L1885.6,437.4L1889.3,439.7L1892.6,443.9L1894.3,441.2L1898.8,439.2L1907.8,436.1L1919.4,432.8L1922,427.4L1944.5,424.7L1950.9,421L1956.6,420.2L1985.4,424.4L1988.5,428.3L1986.5,430.9L1982.9,433.4L2003.5,434.8L2036.2,434.9L2038.6,435.9L2047.9,441.2L2052.3,442.6L2067,442.6L2070.2,440.6L2073.1,437.3L2078.3,437L2088.5,438.3L2108.7,443.5L2126.7,443.9L2126.2,443.9L2137,446.6L2149.6,448.8L2159.9,449.4L2168.4,449.5L2169.6,449L2169.6,447.2L2173,446.6L2179.3,446.9L2185.6,447.8L2196.5,450.3L2220.3,456.9L2238.6,460.1L2241.4,461.4L2243.6,463.1L2245.3,465.3ZM1963.4,736.3L1960,736.3L1958.1,733.9L1960,730.5L1962.3,727.6ZM1691,518L1689.8,521.3L1688.9,522.7L1686.4,525L1684.8,525.8L1680.8,527L1666.2,529.4L1666.5,527.9L1667.3,526.5L1670.7,524L1667.9,520.7L1668.2,518.8L1670.1,516L1673.5,513.2L1672.8,511.4L1669.5,506.9L1668.1,503.4L1668.2,498.4L1669.1,495.9L1669.9,495.1L1671.8,494.1L1673.6,494.1L1677.9,497.8L1678.9,499.7L1677.2,502.4L1678,503.9L1680.4,507.4L1683.9,511.3ZM1647.6,467.3L1641.4,471.5L1634.8,473.7L1629.1,474.1L1622,471.6L1619.9,471.2L1619.9,467.6L1621.5,466.2L1625.6,463.9L1628,463.1L1633.9,462L1641.1,461.6L1644.8,462.4L1647.6,463.7ZM1716.9,566.8L1712.4,566.8L1712.4,562.4L1715.2,560.4L1716.1,560.3ZM1716.9,568L1716.1,578.5L1712.7,578.5L1710.7,570.1L1712.5,568.9L1715.9,568.1ZM1667,512.3L1666.1,516.2L1663.4,519.5L1658.8,522.3L1652.4,524.6L1651.4,521.1L1651.3,515.6L1652.1,511.3L1653.7,508.5L1656,507L1657.4,506.9L1667,506.9ZM1660.5,408.8L1647.3,414.5L1644.8,417.4L1639.4,427.9L1636.1,431.7L1633.5,433.7L1624.4,436.7L1630.1,443.3L1625.4,448.1L1621.7,450.3L1617.6,451.8L1598.2,455L1588.1,461.3L1580.5,463.2L1570.3,466.7L1566.4,470.3L1558.3,480L1555.2,483L1552.3,485L1548.3,486.2L1544.9,485.9L1541.9,484.9L1539.4,483.3L1537.3,481.1L1535.7,478.3L1534.6,474.9L1533.9,470.8L1533.7,464L1535.1,458.4L1538.2,453.8L1544.2,448.5L1545.4,446.9L1545.8,445.7L1544.6,444.8L1541.3,439.7L1540.4,436.9L1537.7,432L1533.1,426.2L1512.5,423.8L1512.2,420.4L1511.4,417.5L1525.7,414.8L1544.8,407.8L1550,406.4L1586.5,406.4L1599.9,403.7L1613.1,402.8L1626.7,402.5L1635.2,403.6L1649.5,407.1L1659.4,407ZM1694.7,577.6L1691.1,578.1L1686.5,579.4L1688.4,576.3L1691.3,572.8L1694.7,574ZM1542.9,402.5L1539.1,405.1L1532.4,408.1L1511.1,415.4L1499.7,420.2L1483.4,426.2L1482.4,428.7L1481.5,429.7L1479,431.1L1473.3,431.9L1462,431.6L1450.5,431L1449.3,429.8L1449.3,426.2L1451.6,424.4L1454.9,423.2L1458.8,423.6L1468.8,426.1L1478.9,426.2L1478.2,424.4L1476,423.2L1467.1,424.1L1465.8,422.1L1465.1,420.2L1475.5,419.9L1476.7,416.6L1480.4,415.1L1483.7,411.8L1494.7,410.6L1484.6,407.6L1526.3,402.5ZM1852.3,812.5L1850.3,814.2L1847.7,814.1L1844.1,811L1844.1,807.7L1845.5,809.5L1848.1,811.3L1850,811.4ZM1477,410.6L1476.7,412.1L1475.8,413.4L1472.2,416L1459.8,415.1L1460.4,413.3L1462.3,410.9L1464.8,408.9L1466.2,408.2L1476,408.2L1476.5,408.8ZM1873.7,819.7L1872.3,827.4L1868.1,842.8L1863.3,858.2L1860.2,866.2L1858,868.7L1855.9,869.8L1852,870.4L1848.6,869.5L1847.2,868.5L1845.2,865.2L1844.6,862.9L1844.1,857.2L1844.2,857.4L1845.2,855L1848.5,843.6L1848.9,829.3L1853.1,826.3L1857.7,822.2L1868.4,810.4L1870.6,810.7L1872,812.8L1873.3,816.2ZM1590,681.1L1584.3,678.3L1583.1,677.1L1582.7,675.4L1587.2,675.4ZM1440.9,674.5L1436.9,680.2L1435.2,678.4L1433.5,675.4ZM1427.9,674.2L1420,674.2L1418.7,672L1418.9,669.4L1424.8,669.4L1427.1,672.3ZM1389,634.3L1384.2,644.8L1381.1,644.8L1379.4,642.5L1378.8,640.3L1380.8,631L1387.8,631L1388.7,632.5ZM1256.4,503L1255.3,508.7L1251.9,508.7L1251.6,505.4L1252.2,503ZM1415.8,667.6L1414.8,670.1L1413.7,671.1L1412.1,671.9L1407.7,673L1399.5,673.1L1395.3,672.1L1390.1,670.3L1394.7,669.5L1396.6,668.6L1397.8,667.4L1399,664.7L1400.2,663.9L1402,663.5L1405.7,663.7L1408.6,664.5ZM1395.5,661.9L1393.2,663.6L1390.1,664.5L1385.6,664.5L1382.2,663.9L1377.8,661.9L1373.1,657.6L1368.9,655.4L1363.9,654.7L1355.7,655.6L1355.7,652L1359.5,650L1363.5,648.9L1370,648.9L1373.6,649.6L1377.2,650.6L1384.5,653.9L1388.1,656.2ZM1385.3,673.3L1376.3,673.3L1376.3,669.4L1385.3,670.6ZM1544.6,786.1L1543.5,791.4L1541.6,795.8L1531.9,811.1L1529,816.8L1529.4,824.8L1528.6,833.6L1525.4,847.1L1522.3,854.4L1520,857.5L1517.6,859.3L1503.5,863.2L1500.8,865.2L1499.7,866.5L1498.1,870L1497.4,874.4L1496.9,880.3L1495.2,886.7L1490.7,897.5L1485.9,906.4L1482.6,910.6L1481.3,911.2L1477.2,911.7L1470.5,911.8L1472.9,916.1L1474.2,919.5L1474.3,922.6L1473.2,925.7L1470.8,927.6L1460.3,930.4L1458.9,935.1L1456.4,941.5L1451,941.5L1454.6,946.8L1455.8,947.7L1455.5,950L1454.4,952.7L1450.2,959.7L1456.7,970.5L1456.2,972.9L1453.2,980.3L1453,981.9L1453.5,985.1L1455,988L1457.4,990.7L1460.9,993L1473.3,1000.2L1467.8,1002L1464.2,1002.6L1460.3,1002.5L1455.8,1001.6L1454,1000.8L1451.8,998.6L1451,995.4L1451.3,993.3L1447.1,992.9L1441.1,991.5L1437.2,988.1L1433.4,982.7L1426.6,969.8L1422.8,964.8L1424.8,957.6L1425,955L1415.5,935.2L1414.1,930.5L1413.3,926.1L1414.3,907.1L1413.6,900.1L1410.5,880.7L1410.4,846.4L1410,844.4L1408.8,842.2L1404.1,836.7L1396.3,830L1385.3,822.1L1368.4,789.4L1364.2,784.1L1362,780.4L1361.4,777.3L1361.4,774.3L1361.9,771.6L1363.6,768.4L1362.7,765.5L1362.5,762.1L1363.4,756.9L1366.3,750.8L1373.4,739.5L1375.1,735.6L1375.9,732.2L1375.8,728.5L1374.1,721.5L1373.5,716.5L1370.7,715.6L1369.6,715.8L1368.1,717.1L1366.2,719.8L1364.8,720.7L1362.3,720.6L1358.1,719.4L1354.2,717.2L1350.4,713.8L1337.4,695.5L1332.1,694.1L1326.2,691.3L1321.9,688.6L1313.4,682.3L1306.6,683.2L1303.8,682.8L1299.9,681.6L1285.7,675L1280.6,672.1L1277,669.4L1274.5,666.1L1274.2,656.2L1273.1,651.9L1266,641.5L1260.5,627.8L1252.5,613L1251.9,615.7L1252.6,618.8L1262.1,646.3L1262.1,649.6L1258.7,649.6L1256.3,647.3L1255.1,644.9L1252.5,637.6L1250.1,634.8L1247.4,630.4L1244,607L1237.3,599.2L1235.5,595.2L1233.9,587.2L1233.3,576.7L1234.7,572.3L1238.7,564.3L1255,537.8L1262.1,536.9L1253.7,534L1251.9,532L1251.1,529.1L1255.3,524L1257.9,510.3L1258.4,504.8L1257.9,502.7L1256.5,501.5L1250.2,500.6L1251.1,496.1L1254.6,496.1L1257.2,498.3L1258.4,498.2L1256.3,495.1L1253.8,492.5L1250.8,490.3L1247.4,488.5L1243.6,487.1L1239.4,486.1L1234.7,485.5L1225.9,485.4L1215.1,487.3L1209.8,488.8L1205.2,490.7L1203.5,491.8L1201.5,494.1L1201.2,496.7L1198.6,498.7L1196.7,499.5L1193.1,499.9L1189.5,498L1188.2,497.9L1183.6,499.5L1170,505.4L1167.6,506L1164.8,505.2L1164,504.3L1163.7,503L1182.3,494.3L1176.9,491.9L1176.9,488.3L1179.2,483.5L1182.8,477.5L1188.3,475.4L1202.9,470.9L1199.5,469.1L1193.6,467.3L1193.6,463.7L1202.5,461.4L1212.4,460.7L1213.6,458.9L1213,452.9L1245.5,445.2L1258.4,442.7L1267.9,443.7L1291.3,449.3L1301.8,450.7L1309.5,450.3L1328.6,446.7L1337.1,446.9L1347.9,448.8L1356.2,450.9L1360.8,452.3L1361.7,454.3L1363.2,455.4L1366.6,455.4L1370.4,454.1L1365.4,451.7L1360.2,448.1L1365,446.3L1362.2,444.5L1364.2,442.4L1362,441.6L1360.3,441.5L1353.9,443.7L1351.2,444.2L1349.3,443.8L1347.5,442.7L1347.5,439.1L1352.4,435.1L1354.9,433.6L1359.9,431.4L1365.2,430.2L1369,430.1L1372.9,430.8L1386.4,435.7L1391.3,434.9L1392.9,435L1394.3,435.7L1395.5,437L1397.7,434.9L1403.6,434.9L1402.9,439.8L1403,442.6L1403.9,444.1L1405.6,444.8L1405.4,447.1L1404,449.8L1401.1,451.6L1396.8,452.5L1393.3,452.5L1389.3,451.7L1386.2,452.3L1410.7,456.5L1412.1,455.3L1410,454.1L1408.4,452.5L1407.6,451.1L1408.3,450.2L1410.4,448.4L1412.2,447.5L1417.5,447.8L1418.9,452.6L1420.3,450.8L1418.7,448L1418.9,446.1L1420.8,444.2L1424.2,442.1L1423.4,441.8L1420.4,442.7L1418.4,442.3L1415.6,440.6L1412.1,437.3L1420.2,434L1426.3,432L1427.8,432.1L1432.1,434L1436.7,431.9L1444.2,431.9L1445.9,437L1451.4,433.8L1455,432.9L1463.6,433.2L1471,434.3L1476.5,437.3L1485.1,438.2L1490.8,443.6L1497,446.3L1498.4,450.5L1500.2,453.8L1502.4,456.2L1504.9,457.7L1504.9,463.4L1502.2,465.6L1499.8,466.4L1496.4,465.6L1492.5,463.4L1491.9,474.2L1489.2,475.6L1486.3,479.3L1478.7,479.3L1474.9,476.9L1467.1,469.7L1455,469.1L1456.9,466.3L1459.5,464.9L1461.7,464.6L1466,465.5L1474.3,461.5L1478,460.7L1480.6,460.7L1481.8,460.1L1470.7,448.6L1469.6,447.8L1463.4,448.4L1455.8,448.2L1450,447.6L1445.7,446.7L1442.8,445.4L1442.6,443L1443.3,439.7L1445.7,437.6L1432.7,439.7L1431.1,439L1429.3,437L1428.2,438.5L1427.9,440L1429.6,440.7L1432.4,440.9L1432.7,448.1L1437.8,450.8L1438.6,455.6L1446.9,450.4L1450.4,448.8L1455,449.1L1456.6,449.9L1457.4,451L1457.4,453.2L1456.6,456L1454.9,458.4L1452.3,460.4L1450.7,461.3L1449.1,461.6L1439.4,462.2L1435.2,464L1445.4,468.8L1444.5,473.3L1429,473.3L1429.1,472L1428.6,471L1427.6,470.5L1426.2,470.3L1422.1,470.6L1416.2,472.1L1414.6,472.7L1410.1,476.9L1394.9,485.1L1391.3,488.1L1390.1,491L1390.5,492.5L1391.7,494.2L1396.5,498L1404.5,502.3L1415.8,507.2L1414.1,517.7L1414.7,519.9L1416.6,522.5L1423.7,511.1L1429.4,506.6L1436.9,500L1438.7,496L1439.5,489.5L1441.9,487L1447.2,480.2L1450.1,477.5L1453.3,476.4L1456.7,476.4L1461,477L1466.4,479.1L1469.3,481.4L1470.5,485.6L1470.8,490.7L1472.3,492.1L1473,492.2L1485.1,485.3L1486.7,489.8L1488.6,502.3L1490.1,506.8L1492.5,509.6L1498.8,512.2L1500.2,514L1500.3,515.8L1499.5,517.3L1493.9,524L1495.3,525.2L1495.7,527.6L1497,530L1499.1,532.4L1502.1,534.8L1502.1,539.3L1496.7,540.8L1491.3,541.4L1486.5,540.8L1478.9,539L1488.2,527.3L1472.7,529.1L1460,530L1457.5,531.5L1462.4,534.5L1464,535.1L1462.9,537.8L1459.5,542L1460.6,544.3L1461.9,545.4L1463.5,546.2L1472.4,547.7L1472.1,548.3L1469.8,550.5L1467.4,552L1454.4,558.2L1450.5,558.2L1448.8,552.2L1444.2,554.3L1434.4,560.3L1429.6,566.5L1419.4,571L1403.1,585.4L1403.6,588.3L1403.4,590.7L1401.7,594.2L1400.2,596L1395.9,599.8L1383.8,607.8L1379.5,611.8L1376.9,615.9L1376.2,617.9L1376.1,621.3L1378,633.4L1376.8,639.7L1373.2,640.5L1372.5,640.6L1372.2,640.8L1372.6,640.9L1373.2,640.9L1372.5,640.8L1371.8,640.4L1370.5,638.8L1368.7,634.5L1365,621.4L1351.5,617.2L1349.6,618L1344.4,622.1L1342.3,623.2L1339.6,622.9L1333.5,620.6L1330.9,620.3L1320.8,625.5L1314.2,630.7L1310.1,638.9L1308.4,644.3L1307.6,649.9L1307.7,656.6L1308.2,660L1309.1,662.9L1310.4,665.2L1312,667.1L1314,668.4L1316.3,669.2L1319,669.4L1322.4,669L1326.9,666.7L1329.4,664.1L1332.9,659.5L1336.7,656.6L1340.8,655.6L1345.5,656.8L1346.2,658.4L1346.3,660.7L1341.1,674.4L1340.1,679.2L1339.9,682.3L1348.1,681.7L1356.5,682.3L1355,699.2L1355,703.6L1356.4,707L1358.4,709.9L1360.4,711.9L1362.4,712.9L1364.7,712.7L1368.7,711.1L1370.8,710.8L1377.6,713.4L1379.7,713.8L1385.9,706L1389.6,702.6L1393.6,700.2L1395.8,699.3L1400.4,698.3L1402.8,698.2L1403.4,702.1L1408.4,700L1419.1,704.8L1425.2,706.7L1432.7,707.8L1435.3,707.2L1439,705.3L1440.4,704.4L1442,703.3L1439.2,701.8L1443.5,691.4L1444.5,688L1439.2,679.3L1444.5,679.3L1448.5,688.6L1443.6,695.5L1442,699.4L1442.6,701.4L1444.5,702.4L1442.8,702.7L1441.8,703.8L1442,710.2L1444.9,713.7L1451,719.6L1459.2,726.4L1473,729.1L1475.1,730.2L1477,731.7L1478.6,733.8L1481.3,739.4L1482.3,743L1483.7,751.6L1487.3,754.1L1492,756.5L1494.7,757.2L1499,757.6L1500.6,758.2L1501.9,759.1L1506.3,764.8L1514.6,765.5L1526,767.5L1532.4,772.4L1541.8,777.4L1543.9,781.5ZM1903.3,455.6L1902.9,453.2L1901.7,451.5L1899.7,450.3L1896.9,449.9L1896.6,457.1L1896,461.3L1899.4,461.3L1902.4,457.5ZM1806.1,465.2L1804.9,463.9L1802.9,463L1794.8,462.2L1793.1,461.1L1791.8,460.7L1787.4,460.7L1794.6,467.8L1798.4,469.9L1799.6,469.7L1797.6,468.9L1796.7,467.3L1798.4,465.2ZM1878.2,583.3L1876.8,580.3L1872.6,573.4L1871.5,568L1871,567L1868.2,563.5L1861.6,557.6L1861.6,553.7L1865.6,551.9L1870.6,548.9L1867.3,544.8L1864.9,543.2L1862.4,542.4L1860.2,542.3L1858.3,542.8L1853.8,545L1850.3,547.7L1848.6,549.6L1847.5,551.6L1846.9,553.7L1854.6,564.8L1857.1,569.6L1858.7,575.6L1858.7,578.6L1858.2,581.2L1858.6,581.9L1861.2,584.7L1864.4,587.2L1869.1,589.7L1872.3,590.5L1874.9,590.1L1876.8,588.7L1877.9,586.5ZM1776.4,486.5L1771.4,484.1L1761.8,485.2L1758.5,485.2L1756,484.5L1754.3,483L1753.4,480.9L1753.5,478.6L1755.1,475.5L1759,469.3L1759.8,467L1759,465.3L1756.4,462.5L1739.2,480.2L1740.1,482.5L1743.4,486.5L1744,488L1743.4,491L1740.4,496.4L1734.7,502.7L1728.3,505.4L1720.9,510.5L1730,512.5L1735.7,512.8L1742.5,512L1746.5,511L1750.2,509.6L1752.4,508.2L1753.7,506.3L1755.9,498.8L1759.7,498.5L1762.3,497.6L1761.2,491L1766.3,490.7L1770.5,489.8L1773.9,488.4ZM1890.7,635.2L1888.7,635.5L1884,635L1879.7,633.5L1877.7,632.4L1874,629.3L1867.2,621.4L1864.4,619.3L1863.6,623.8L1867.3,629.8L1869.5,634.9L1870.3,634L1871,634.1L1873.7,635.7L1876,638.2L1880.5,644.8L1885.3,641.2ZM1830,564.5L1829,563L1826.1,560.3L1814.2,551.6L1815.9,544.7L1814.7,542.6L1812.8,541.4L1805.2,545.6L1806.9,550.4L1805.5,552.2L1801.3,552.2L1797.1,547.1L1792.5,543.2L1787.5,550.1L1783.8,555.9L1781.7,560.6L1781,564.2L1781,564.8L1784.6,567.9L1786.8,569.1L1788.8,569.8L1792.3,569.4L1799.1,566.5L1801.8,566L1807.2,566.9L1817.1,570.1L1821.3,570.7L1825.1,570.4L1827.8,569.2L1829.5,567.2ZM1845.8,693.1L1844.8,687.3L1842.7,679.6L1831.2,663.7L1824.9,649L1811.1,627.1L1809.8,630.1L1809.2,631L1809,631L1808.9,630.8L1808.9,630.4L1809,630.9L1809.2,631.6L1811.1,635.7L1821.6,656.2L1824.9,667.3L1829.8,675.3L1835,682.3L1840.3,688.2ZM1237.2,1108.8L1242.4,1108.8L1247.5,1108.9L1252.7,1109L1257.9,1109.1L1263.1,1109.2L1268.2,1109.2L1271.6,1108.8L1275.1,1108.3L1278.6,1107.7L1282.2,1107.2L1285.9,1106.7L1288.3,1105.3L1290.9,1103.8L1293.7,1102.2L1290.7,1097.7L1281.6,1095.4L1272.5,1092.9L1264.1,1090.9L1255.8,1088.9L1250.1,1086.9L1255.1,1086.6L1260,1086.2L1265,1085.9L1270,1085.5L1272.6,1083.3L1275.2,1081L1280.1,1080.4L1284.9,1079.8L1289.8,1079.2L1296,1078.5L1302.2,1077.8L1307.2,1077.2L1312.2,1076.7L1317.3,1076.2L1322.4,1075.6L1328.9,1075.6L1335.5,1075.6L1342.1,1075.6L1348,1076L1354,1076.3L1360,1076.7L1366.4,1077.6L1372.8,1078.5L1379.3,1078.5L1385.8,1078.5L1392.3,1078.5L1395.5,1072L1402.7,1072L1409.8,1072L1416.4,1072L1423,1072L1429.7,1072L1435.9,1072.7L1442,1073.4L1448.1,1074.2L1454.8,1073.4L1461.4,1072.7L1466.4,1066.4L1469.2,1060.8L1478.2,1058.1L1477.9,1051.2L1482.5,1044.6L1489.5,1039.5L1498.6,1035.1L1503.6,1035.9L1500.4,1039.9L1493.8,1042.6L1491.8,1047.3L1488.3,1051.2L1488.3,1055.1L1497,1060.8L1504.8,1068.3L1508.8,1073.8L1508.6,1079.2L1502.7,1086.2L1497.4,1087.9L1492.2,1089.6L1487,1091.3L1482.6,1092.5L1478.2,1093.7L1473.9,1095L1469.6,1096.1L1480.5,1102.2L1486.2,1102.8L1491.8,1103.4L1497.5,1104L1503.1,1104.5L1508.7,1105.1L1513.5,1104.9L1518.4,1104.6L1523.2,1104.4L1528.1,1104.2L1533,1104L1537.6,1103.4L1542.3,1102.8L1547,1102.2L1551.7,1101.7L1556.5,1101.1L1561.1,1100.1L1565.7,1099.1L1570.4,1098L1575,1096.7L1579.7,1095.3L1584.5,1093.9L1591,1089.6L1597.1,1087.2L1603.3,1084.8L1608.3,1082.7L1613.4,1080.6L1618.5,1078.1L1623.7,1075.6L1629.1,1073.8L1634.5,1072L1639.9,1069.8L1645.5,1067.6L1653.9,1064.6L1659.7,1064.2L1665.5,1063.8L1672.7,1062.3L1680,1060.8L1687.3,1061.4L1694.6,1061.9L1701.9,1061.4L1709.3,1060.8L1716.6,1060.4L1724,1060L1731.3,1060.4L1738.6,1060.8L1745.8,1061.2L1753.1,1061.6L1760.6,1060.4L1768.2,1059.3L1777.7,1056.2L1783.3,1057.4L1788.9,1058.5L1798.6,1055.5L1805,1053.9L1811.4,1052.4L1817.8,1051.2L1824.1,1050.1L1830.9,1047.7L1837.8,1045.4L1843.7,1045.8L1849.6,1046.2L1854.4,1049.3L1860.1,1050.3L1865.7,1051.2L1871.4,1051.8L1877.1,1052.4L1885.7,1053.2L1886.4,1057.8L1890.8,1060.8L1897,1060L1907.5,1057L1918.9,1052.4L1926,1050.5L1933.1,1048.5L1939.3,1048.1L1945.6,1047.7L1952,1047.2L1958.4,1046.6L1964.6,1046.4L1970.8,1046.2L1977.3,1045.4L1983.9,1044.6L1990,1044.6L1996.1,1044.6L2001.5,1045.6L2006.8,1046.6L2013.4,1045.8L2020.1,1045L2025.3,1046.2L2030.4,1047.3L2036,1047.9L2041.6,1048.5L2048.2,1047.7L2054.9,1047L2060.3,1047.7L2065.7,1048.5L2072.7,1047.3L2079.8,1046.2L2086,1046L2092.3,1045.8L2097.4,1046.8L2102.6,1047.7L2107.8,1048.5L2113.1,1049.3L2116.8,1051.6L2120.4,1053.9L2125.6,1054.7L2130.7,1055.5L2135.8,1056.2L2140.9,1057L2144.7,1058.9L2148.4,1060.8L2153,1061.9L2157.4,1063.1L2161.9,1064.2L2166.3,1065.3L2172.2,1067.6L2161.2,1073.8L2151.9,1076.5L2142.7,1079.2L2125.9,1086.2L2121.9,1090.6L2113.4,1092.6L2104.8,1094.5L2095.2,1099.3L2095.1,1103.1L2098.5,1104.2L2101.7,1105.4L2104.8,1106.4L2108.5,1106.9L2112.1,1107.4L2115.7,1107.8L2119.3,1108.3L2122.8,1108.8L2097.8,1114.7L2065.3,1118L2061,1118L2056.7,1118L2052.4,1118L2048.1,1118L2043.9,1118L2039.6,1118L2035.3,1118L2031,1118L2026.7,1118L2022.5,1118L2018.2,1118L2013.9,1118L2009.6,1118L2005.3,1118L2001.1,1118L1996.8,1118L1992.5,1118L1988.2,1118L1983.9,1118L1979.7,1118L1975.4,1118L1971.1,1118L1966.8,1118L1962.5,1118L1958.3,1118L1954,1118L1949.7,1118L1945.4,1118L1941.1,1118L1936.8,1118L1932.6,1118L1928.3,1118L1924,1118L1919.7,1118L1915.4,1118L1911.2,1118L1906.9,1118L1902.6,1118L1898.3,1118L1894,1118L1889.8,1118L1885.5,1118L1881.2,1118L1876.9,1118L1872.6,1118L1868.4,1118L1864.1,1118L1859.8,1118L1855.5,1118L1851.2,1118L1847,1118L1842.7,1118L1838.4,1118L1834.1,1118L1829.8,1118L1825.5,1118L1821.3,1118L1817,1118L1812.7,1118L1808.4,1118L1804.1,1118L1799.9,1118L1795.6,1118L1791.3,1118L1787,1118L1782.7,1118L1778.5,1118L1774.2,1118L1769.9,1118L1765.6,1118L1761.3,1118L1757.1,1118L1752.8,1118L1748.5,1118L1744.2,1118L1739.9,1118L1735.7,1118L1731.4,1118L1727.1,1118L1722.8,1118L1718.5,1118L1714.2,1118L1710,1118L1705.7,1118L1701.4,1118L1697.1,1118L1692.8,1118L1688.6,1118L1684.3,1118L1680,1118L1675.7,1118L1671.4,1118L1667.2,1118L1662.9,1118L1658.6,1118L1654.3,1118L1650,1118L1645.8,1118L1641.5,1118L1637.2,1118L1632.9,1118L1628.6,1118L1624.3,1118L1620.1,1118L1615.8,1118L1611.5,1118L1607.2,1118L1602.9,1118L1598.7,1118L1594.4,1118L1590.1,1118L1585.8,1118L1581.5,1118L1577.3,1118L1573,1118L1568.7,1118L1564.4,1118L1560.1,1118L1555.9,1118L1551.6,1118L1547.3,1118L1543,1118L1538.7,1118L1534.5,1118L1530.2,1118L1525.9,1118L1521.6,1118L1517.3,1118L1513,1118L1508.8,1118L1504.5,1118L1500.2,1118L1495.9,1118L1491.6,1118L1487.4,1118L1483.1,1118L1478.8,1118L1474.5,1118L1470.2,1118L1466,1118L1461.7,1118L1457.4,1118L1453.1,1118L1448.8,1118L1444.6,1118L1440.3,1118L1436,1118L1431.7,1118L1427.4,1118L1423.2,1118L1418.9,1118L1414.6,1118L1410.3,1118L1406,1118L1401.7,1118L1397.5,1118L1393.2,1118L1388.9,1118L1384.6,1118L1380.3,1118L1376.1,1118L1371.8,1118L1367.5,1118L1363.2,1118L1358.9,1118L1354.7,1118L1350.4,1118L1346.1,1118L1341.8,1118L1337.5,1118L1333.3,1118L1329,1118L1324.7,1118L1320.4,1118L1316.1,1118L1311.9,1118L1307.6,1118L1303.3,1118L1299,1118L1294.7,1118L1262.2,1114.7ZM1230.2,442.8L1233,443.3L1235.8,443.8L1237.9,444.6L1240,445.3L1243.4,445.5L1246.9,445.7L1250.1,446.1L1253.4,446.4L1256.2,446.6L1258.9,446.7L1261.7,446.8L1263.7,447.8L1265.7,448.7L1261.8,452.6L1258.1,456.5L1254.3,460.4L1250.6,464.4L1246.9,468.4L1243.3,472.4L1239.7,476.4L1236.2,480.5L1232.7,484.6L1235,485.7L1237.3,486.7L1239.7,487.7L1242.1,488.8L1244,490.3L1246,491.8L1248.1,493.4L1250.1,495L1251.3,497.7L1252.5,500.5L1253.8,503.3L1250.2,507.6L1246.2,506.7L1243.8,505.9L1241.6,502.1L1240.4,497L1239.1,494.5L1237.8,492.1L1235.6,490.2L1233.4,488.3L1230.4,487.9L1227.4,487.5L1224.4,487.1L1221.4,486.7L1217.8,484.6L1218,482.2L1215.1,483L1209.8,485.5L1203.9,487.1L1198.5,489.2L1193.3,490L1194.8,488.8L1200,484.6L1207,481.8L1202.2,482.6L1197.2,484.6L1191.7,487.9L1187.8,490.8L1182,494.5L1175.6,497L1167.8,500.4L1161.4,502.5L1157.7,504.6L1150.9,506.7L1145.1,507.8L1139.8,509.3L1133.8,509.7L1140.3,508L1143.7,506.7L1148.7,505L1153.8,503.3L1162.6,500L1169.1,496.6L1175.1,492.1L1171.1,491.2L1166.7,491.6L1162.4,492.1L1158,492.5L1160.2,490.8L1163.7,487.1L1157.6,487.5L1156,484.2L1157.9,480.2L1165.7,476.1L1171.9,474.3L1178.1,472.5L1183.5,470.9L1186.6,467.3L1182.9,467.9L1179.2,468.5L1175.5,468.5L1171.8,468.5L1168.8,468.1L1168.3,464.2L1173,462.8L1177.7,461.4L1181.8,460.8L1185.9,460.3L1189.1,461L1192.4,461.8L1192.6,459.1L1188.7,458.3L1188.3,456L1186.1,454.8L1184,453.7L1188.5,451.4L1194,450L1199.6,448.7L1207.3,446.1L1212.7,445.1L1218,444.2L1222.7,443.2L1227.4,442.3ZM1184,498.7L1181,499.5L1178.6,499.2L1178,497.9L1179.5,496.2L1182.3,494.9L1185.2,494.6L1186.7,495.4L1186.3,497ZM1127.1,513.6L1124.9,514.1L1123,514L1122.4,513.2L1123.3,512.2L1125.3,511.4L1127.4,511.2L1128.8,511.7L1128.6,512.7ZM1119.3,515.6L1117.5,516.1L1116,515.9L1115.6,515.2L1116.3,514.4L1117.9,513.7L1119.6,513.5L1120.7,514L1120.5,514.8ZM1109.7,517.6L1108.4,518L1107.4,517.9L1107.1,517.3L1107.7,516.6L1108.9,516L1110.2,515.9L1110.9,516.3L1110.7,517ZM1101.2,519.7L1099.9,520L1098.9,519.9L1098.6,519.4L1099.1,518.8L1100.3,518.3L1101.5,518.2L1102.2,518.5L1102.1,519.1ZM1094.9,520.6L1093.3,520.9L1091.8,520.8L1091.2,520.3L1091.7,519.6L1093.2,519.1L1094.9,519L1096,519.4L1096,520ZM1085.8,522L1084.2,522.3L1083,522.2L1082.6,521.6L1083.2,520.9L1084.6,520.3L1086.1,520.2L1087,520.6L1086.8,521.3ZM1079.6,522.2L1078.5,522.5L1077.7,522.4L1077.5,522L1078,521.4L1079,520.9L1080,520.8L1080.6,521.1L1080.4,521.7ZM1154,473.9L1151,474.5L1148.5,474.3L1147.6,473.5L1148.8,472.4L1151.5,471.5L1154.4,471.3L1156.2,471.9L1156,472.9ZM1151.7,487.3L1149.7,487.9L1148.1,487.7L1147.9,486.8L1149,485.7L1150.9,484.9L1152.8,484.7L1153.8,485.2L1153.4,486.3ZM2286.2,523.1L2285.4,523.4L2284.2,523.3L2283.1,522.8L2282.6,522.3L2282.9,521.8L2284,521.7L2285.2,522L2286.1,522.6ZM2278.7,520.9L2278.1,521.2L2277.1,521.1L2276.1,520.7L2275.6,520.1L2275.8,519.6L2276.6,519.5L2277.7,519.8L2278.5,520.4ZM2260.8,517.1L2260,517.4L2258.8,517.3L2257.7,516.8L2257.2,516.2L2257.5,515.8L2258.6,515.7L2259.8,516L2260.7,516.5Z" fill="#cdcdcd" fill-rule="nonzero"/></g><path d="M2065.3,1118.0L2089.4,1116.0L2109.2,1112.4L2126.0,1107.7L2140.5,1102.2L2153.4,1096.1L2165.3,1089.6L2176.3,1082.7L2186.9,1075.6L2197.1,1068.3L2207.0,1060.8L2216.6,1053.2L2226.1,1045.4L2235.4,1037.5L2244.4,1029.5L2253.2,1021.3L2261.8,1013.0L2270.1,1004.7L2278.2,996.2L2285.9,987.6L2293.3,978.9L2300.5,970.2L2307.3,961.4L2313.7,952.5L2319.9,943.6L2325.7,934.6L2331.2,925.6L2336.4,916.6L2341.3,907.5L2345.8,898.5L2350.1,889.4L2354.0,880.3L2357.7,871.3L2361.0,862.2L2364.1,853.2L2366.9,844.1L2369.4,835.1L2371.6,826.1L2373.6,817.0L2375.3,808.0L2376.7,799.0L2377.9,790.0L2378.8,781.0L2379.5,772.0L2379.9,763.0L2380.0,754.0L2379.9,745.0L2379.5,736.0L2378.8,727.0L2377.9,718.0L2376.7,709.0L2375.3,700.0L2373.6,691.0L2371.6,681.9L2369.4,672.9L2366.9,663.9L2364.1,654.8L2361.0,645.8L2357.7,636.7L2354.0,627.7L2350.1,618.6L2345.8,609.5L2341.3,600.5L2336.4,591.4L2331.2,582.4L2325.7,573.4L2319.9,564.4L2313.7,555.5L2307.3,546.6L2300.5,537.8L2293.3,529.1L2285.9,520.4L2278.2,511.8L2270.1,503.3L2261.8,495.0L2253.2,486.7L2244.4,478.5L2235.4,470.5L2226.1,462.6L2216.6,454.8L2207.0,447.2L2197.1,439.7L2186.9,432.4L2176.3,425.3L2165.3,418.4L2153.4,411.9L2140.5,405.8L2126.0,400.3L2109.2,395.6L2089.4,392.0L2065.3,390.0L1294.7,390.0L1270.6,392.0L1250.8,395.6L1234.0,400.3L1219.5,405.8L1206.6,411.9L1194.7,418.4L1183.7,425.3L1173.1,432.4L1162.9,439.7L1153.0,447.2L1143.4,454.8L1133.9,462.6L1124.6,470.5L1115.6,478.5L1106.8,486.7L1098.2,495.0L1089.9,503.3L1081.8,511.8L1074.1,520.4L1066.7,529.1L1059.5,537.8L1052.7,546.6L1046.3,555.5L1040.1,564.4L1034.3,573.4L1028.8,582.4L1023.6,591.4L1018.7,600.5L1014.2,609.5L1009.9,618.6L1006.0,627.7L1002.3,636.7L999.0,645.8L995.9,654.8L993.1,663.9L990.6,672.9L988.4,681.9L986.4,691.0L984.7,700.0L983.3,709.0L982.1,718.0L981.2,727.0L980.5,736.0L980.1,745.0L980.0,754.0L980.1,763.0L980.5,772.0L981.2,781.0L982.1,790.0L983.3,799.0L984.7,808.0L986.4,817.0L988.4,826.1L990.6,835.1L993.1,844.1L995.9,853.2L999.0,862.2L1002.3,871.3L1006.0,880.3L1009.9,889.4L1014.2,898.5L1018.7,907.5L1023.6,916.6L1028.8,925.6L1034.3,934.6L1040.1,943.6L1046.3,952.5L1052.7,961.4L1059.5,970.2L1066.7,978.9L1074.1,987.6L1081.8,996.2L1089.9,1004.7L1098.2,1013.0L1106.8,1021.3L1115.6,1029.5L1124.6,1037.5L1133.9,1045.4L1143.4,1053.2L1153.0,1060.8L1162.9,1068.3L1173.1,1075.6L1183.7,1082.7L1194.7,1089.6L1206.6,1096.1L1219.5,1102.2L1234.0,1107.7L1250.8,1112.4L1270.6,1116.0L1294.7,1118.0Z" fill="none" stroke="#3a3a3a" stroke-width="1.7"/><circle cx="1257" cy="539.5" r="6.9" fill="#2a6dad" fill-opacity="0.9" stroke="#eef5fc" stroke-width="1.7" stroke-opacity="0.95"/><circle cx="1251" cy="548" r="6.9" fill="#2a6dad" fill-opacity="0.9" stroke="#eef5fc" stroke-width="1.7" stroke-opacity="0.95"/><circle cx="1246" cy="553" r="6.9" fill="#2a6dad" fill-opacity="0.68" stroke="#eef5fc" stroke-width="1.7" stroke-opacity="0.95"/><circle cx="1238" cy="583" r="6.9" fill="#2a6dad" fill-opacity="0.9" stroke="#eef5fc" stroke-width="1.7" stroke-opacity="0.95"/><circle cx="1245.5" cy="600" r="6.9" fill="#2a6dad" fill-opacity="0.9" stroke="#eef5fc" stroke-width="1.7" stroke-opacity="0.95"/><circle cx="1268" cy="602" r="6.9" fill="#2a6dad" fill-opacity="0.68" stroke="#eef5fc" stroke-width="1.7" stroke-opacity="0.95"/><circle cx="1303" cy="574" r="6.9" fill="#2a6dad" fill-opacity="0.9" stroke="#eef5fc" stroke-width="1.7" stroke-opacity="0.95"/><circle cx="1322.5" cy="605" r="6.9" fill="#2a6dad" fill-opacity="0.9" stroke="#eef5fc" stroke-width="1.7" stroke-opacity="0.95"/><circle cx="1312.5" cy="620.5" r="6.9" fill="#2a6dad" fill-opacity="0.9" stroke="#eef5fc" stroke-width="1.7" stroke-opacity="0.95"/><circle cx="1325" cy="619" r="6.9" fill="#2a6dad" fill-opacity="0.68" stroke="#eef5fc" stroke-width="1.7" stroke-opacity="0.95"/><circle cx="1352.5" cy="551" r="6.9" fill="#2a6dad" fill-opacity="0.9" stroke="#eef5fc" stroke-width="1.7" stroke-opacity="0.95"/><circle cx="1366" cy="567.5" r="15" fill="#2a6dad" fill-opacity="0.68" stroke="#eef5fc" stroke-width="1.7" stroke-opacity="0.95"/><circle cx="1367" cy="563" r="10" fill="#2a6dad" fill-opacity="0.68" stroke="#eef5fc" stroke-width="1.7" stroke-opacity="0.95"/><circle cx="1368" cy="560" r="6.5" fill="#2a6dad" fill-opacity="0.9" stroke="#eef5fc" stroke-width="1.7" stroke-opacity="0.95"/><circle cx="1380" cy="551" r="6.9" fill="#2a6dad" fill-opacity="0.68" stroke="#eef5fc" stroke-width="1.7" stroke-opacity="0.95"/><circle cx="1395" cy="563" r="6.9" fill="#2a6dad" fill-opacity="0.68" stroke="#eef5fc" stroke-width="1.7" stroke-opacity="0.95"/><circle cx="1418" cy="559" r="6.9" fill="#2a6dad" fill-opacity="0.68" stroke="#eef5fc" stroke-width="1.7" stroke-opacity="0.95"/><circle cx="1416" cy="569" r="6.9" fill="#2a6dad" fill-opacity="0.68" stroke="#eef5fc" stroke-width="1.7" stroke-opacity="0.95"/><circle cx="1410" cy="572" r="6.9" fill="#2a6dad" fill-opacity="0.9" stroke="#eef5fc" stroke-width="1.7" stroke-opacity="0.95"/><circle cx="1401" cy="578" r="6.9" fill="#2a6dad" fill-opacity="0.9" stroke="#eef5fc" stroke-width="1.7" stroke-opacity="0.95"/><circle cx="1370" cy="601" r="6.9" fill="#2a6dad" fill-opacity="0.68" stroke="#eef5fc" stroke-width="1.7" stroke-opacity="0.95"/><circle cx="1382" cy="600" r="6.9" fill="#2a6dad" fill-opacity="0.68" stroke="#eef5fc" stroke-width="1.7" stroke-opacity="0.95"/><circle cx="1371" cy="627.5" r="6.9" fill="#2a6dad" fill-opacity="0.68" stroke="#eef5fc" stroke-width="1.7" stroke-opacity="0.95"/><circle cx="1084" cy="665" r="6.9" fill="#2a6dad" fill-opacity="0.68" stroke="#eef5fc" stroke-width="1.7" stroke-opacity="0.95"/><circle cx="1404" cy="715" r="6.9" fill="#2a6dad" fill-opacity="0.68" stroke="#eef5fc" stroke-width="1.7" stroke-opacity="0.95"/><circle cx="1421" cy="706" r="6.9" fill="#2a6dad" fill-opacity="0.68" stroke="#eef5fc" stroke-width="1.7" stroke-opacity="0.95"/><circle cx="1442" cy="705.5" r="6.9" fill="#2a6dad" fill-opacity="0.68" stroke="#eef5fc" stroke-width="1.7" stroke-opacity="0.95"/><circle cx="1679.5" cy="754" r="6.9" fill="#2a6dad" fill-opacity="0.68" stroke="#eef5fc" stroke-width="1.7" stroke-opacity="0.95"/><circle cx="2048" cy="678" r="6.9" fill="#2a6dad" fill-opacity="0.68" stroke="#eef5fc" stroke-width="1.7" stroke-opacity="0.95"/><circle cx="2177" cy="595" r="6.9" fill="#2a6dad" fill-opacity="0.68" stroke="#eef5fc" stroke-width="1.7" stroke-opacity="0.95"/><circle cx="1696.75" cy="518" r="38.75" fill="#2a6dad" fill-opacity="0.68" stroke="#eef5fc" stroke-width="1.7" stroke-opacity="0.95"/><circle cx="1681" cy="521" r="15.5" fill="#2a6dad" fill-opacity="0.9" stroke="#eef5fc" stroke-width="1.7" stroke-opacity="0.95"/><circle cx="1709" cy="531" r="12" fill="#2a6dad" fill-opacity="0.9" stroke="#eef5fc" stroke-width="1.7" stroke-opacity="0.95"/><circle cx="1697" cy="554" r="7" fill="#2a6dad" fill-opacity="0.68" stroke="#eef5fc" stroke-width="1.7" stroke-opacity="0.95"/><rect x="2200" y="308" width="176" height="44" fill="#808080"/><svg x="2206" y="313" width="34.0" height="34" viewBox="0 0 512 512"><path fill="#9c9c9c" d="M149.1 64.8 138.7 96H64c-35.3 0-64 28.7-64 64v256c0 35.3 28.7 64 64 64h384c35.3 0 64-28.7 64-64V160c0-35.3-28.7-64-64-64h-74.7l-10.4-31.2C356.4 45.2 338.1 32 317.4 32H194.6c-20.7 0-39 13.2-45.5 32.8M256 192a96 96 0 1 1 0 192 96 96 0 1 1 0-192"/></svg><svg x="2252" y="314" width="28.0" height="32" viewBox="0 0 448 512"><path fill="#9c9c9c" d="M64 32C28.7 32 0 60.7 0 96v320c0 35.3 28.7 64 64 64h320c35.3 0 64-28.7 64-64V96c0-35.3-28.7-64-64-64zm136 312v-64h-64c-13.3 0-24-10.7-24-24s10.7-24 24-24h64v-64c0-13.3 10.7-24 24-24s24 10.7 24 24v64h64c13.3 0 24 10.7 24 24s-10.7 24-24 24h-64v64c0 13.3-10.7 24-24 24s-24-10.7-24-24"/></svg><svg x="2296" y="314" width="28.0" height="32" viewBox="0 0 448 512"><path fill="#9c9c9c" d="M64 32C28.7 32 0 60.7 0 96v320c0 35.3 28.7 64 64 64h320c35.3 0 64-28.7 64-64V96c0-35.3-28.7-64-64-64zm72 200h176c13.3 0 24 10.7 24 24s-10.7 24-24 24H136c-13.3 0-24-10.7-24-24s10.7-24 24-24"/></svg><svg x="2338" y="314" width="28.0" height="32" viewBox="0 0 448 512"><path fill="#9c9c9c" d="M32 32C14.3 32 0 46.3 0 64v96c0 17.7 14.3 32 32 32s32-14.3 32-32V96h64c17.7 0 32-14.3 32-32s-14.3-32-32-32zm32 320c0-17.7-14.3-32-32-32S0 334.3 0 352v96c0 17.7 14.3 32 32 32h96c17.7 0 32-14.3 32-32s-14.3-32-32-32H64zM320 32c-17.7 0-32 14.3-32 32s14.3 32 32 32h64v64c0 17.7 14.3 32 32 32s32-14.3 32-32V64c0-17.7-14.3-32-32-32zm128 320c0-17.7-14.3-32-32-32s-32 14.3-32 32v64h-64c-17.7 0-32 14.3-32 32s14.3 32 32 32h96c17.7 0 32-14.3 32-32z"/></svg><g fill="#3f78ad"><rect x="712.5" y="1326.5" width="13.5" height="2.5"/><rect x="726" y="1322.25" width="20" height="6.75"/><rect x="746" y="1324.5" width="24" height="4.5"/><rect x="770" y="1308.25" width="20" height="20.75"/><rect x="790" y="1314.5" width="10" height="14.5"/><rect x="800" y="1316.5" width="12" height="12.5"/><rect x="812" y="1322.25" width="10" height="6.75"/><rect x="848" y="1322.25" width="10" height="6.75"/><rect x="858" y="1320.25" width="20" height="8.75"/><rect x="880" y="1224.5" width="20" height="104.5"/><rect x="900" y="1306" width="12" height="23"/></g><g stroke="#000" stroke-width="1.6" fill="none"><path d="M615,1225V1340"/><path d="M614,1329H2748"/><path d="M881.5,1329v11"/><path d="M1148.0,1329v11"/><path d="M1414.5,1329v11"/><path d="M1681.0,1329v11"/><path d="M1947.5,1329v11"/><path d="M2214.0,1329v11"/><path d="M2480.5,1329v11"/><path d="M2747.0,1329v11"/></g><g font-family="Liberation Sans,Arial,sans-serif" font-size="20" fill="#000"><text x="615.0" y="1360" text-anchor="middle">2000</text><text x="881.5" y="1360" text-anchor="middle">2002</text><text x="1148.0" y="1360" text-anchor="middle">2004</text><text x="1414.5" y="1360" text-anchor="middle">2006</text><text x="1681.0" y="1360" text-anchor="middle">2008</text><text x="1947.5" y="1360" text-anchor="middle">2010</text><text x="2214.0" y="1360" text-anchor="middle">2012</text><text x="2480.5" y="1360" text-anchor="middle">2014</text><text x="2747.0" y="1360" text-anchor="middle">2016</text><text x="607" y="1334.75" text-anchor="end">0</text><text x="607" y="1307.5" text-anchor="end">200</text><text x="607" y="1280.25" text-anchor="end">400</text><text x="607" y="1253" text-anchor="end">600</text></g></svg>
<script>(function(){var s=window.innerWidth/3360;if(s>0&&Math.abs(s-1)>0.02){document.documentElement.style.zoom=s;}})();</script>
</body></html>
